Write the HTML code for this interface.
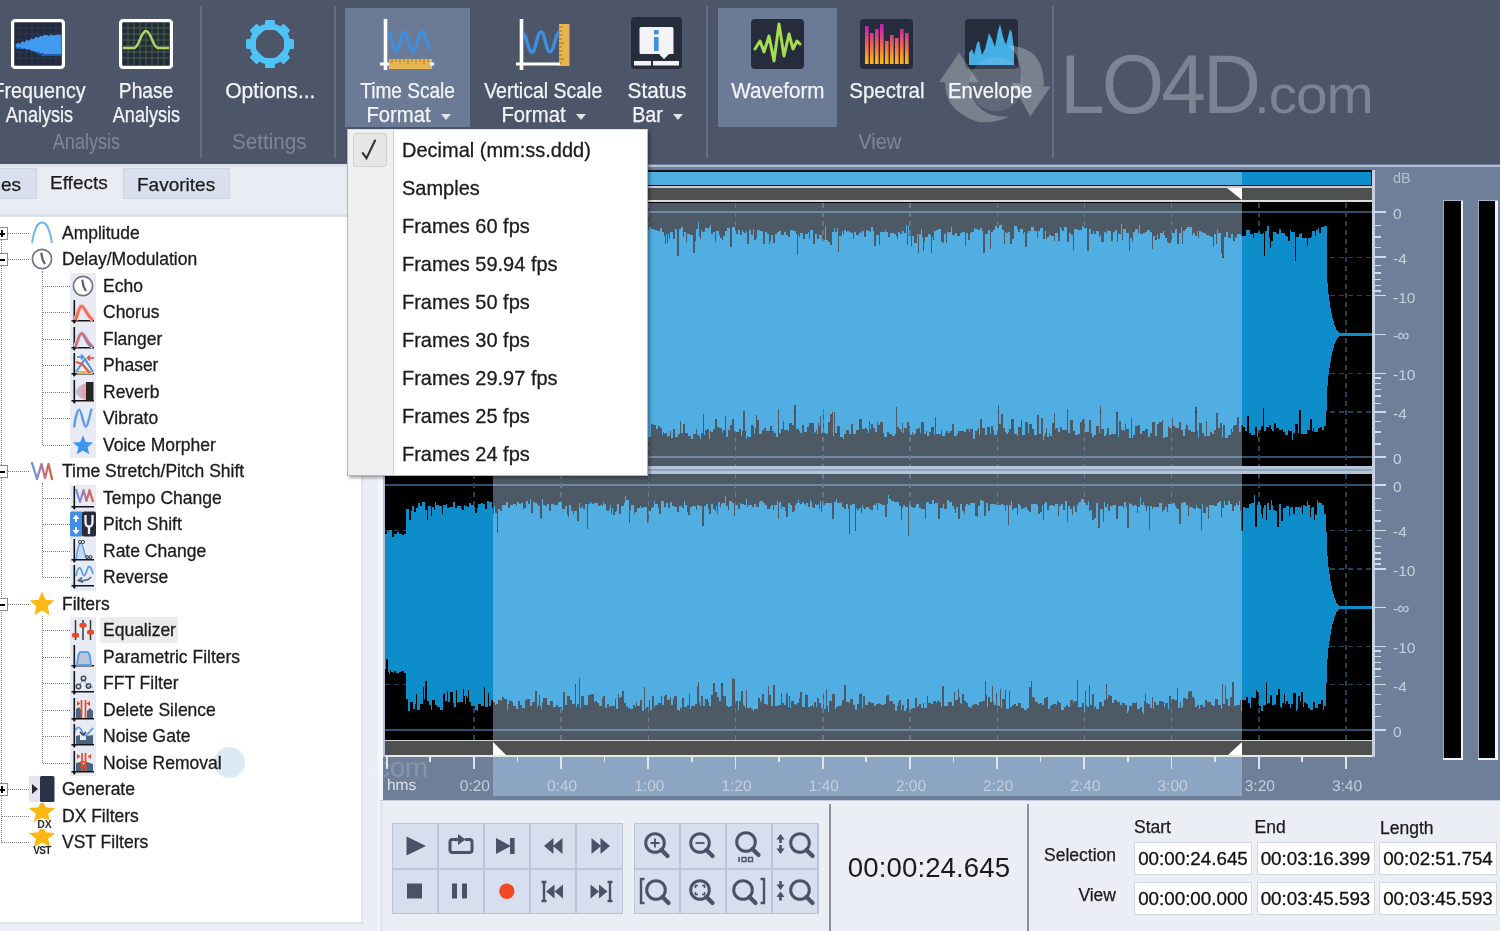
<!DOCTYPE html>
<html lang="en">
<head>
<meta charset="utf-8">
<title>Audio Editor</title>
<style>
*{box-sizing:border-box;margin:0;padding:0}
html,body{width:1500px;height:931px;overflow:hidden;background:#eceef6;font-family:"Liberation Sans",sans-serif;color:#1b1b1b}
.abs{position:absolute}
#ribbon{position:absolute;left:0;top:0;width:1500px;height:164px;background:#4d5669}
#ribbon .sep{position:absolute;top:6px;width:2px;height:152px;background:#626c82;margin-left:-1px}
.rb{-webkit-text-stroke:.25px #f2f4f8;position:absolute;text-align:center;color:#f2f4f8;font-size:21.2px;line-height:23.8px;white-space:nowrap}
.sx{display:inline-block;transform-origin:50% 50%}
.rb.hot{background:#6b7b95}
.rb .lbl{position:absolute;left:0;right:0;text-align:center}
.grp{position:absolute;top:130.4px;font-size:21.2px;line-height:24px;color:#7d8699;text-align:center}
.arrow{display:inline-block;width:0;height:0;border-left:5px solid transparent;border-right:5px solid transparent;border-top:6px solid #dfe3ea;margin-left:9px;vertical-align:2px}
/* left panel */
#left{position:absolute;left:0;top:164px;width:363px;height:767px;background:#fff}
#tabstrip{position:absolute;left:0;top:0;width:363px;height:53px;background:#e9ecf5}
.tab{-webkit-text-stroke:.25px #1b1b1b;position:absolute;top:4px;height:31px;background:#d9dfec;border:1px solid #cdd4e2;font-size:17.5px;line-height:30px;text-align:center;color:#1b1b1b}
.tab.on{background:#e9ecf5;border-color:#e9ecf5;top:3px;height:34px}
.row{-webkit-text-stroke:.3px #1b1b1b;position:absolute;left:0;height:26px;font-size:18.1px;line-height:26px;white-space:nowrap;color:#1b1b1b;transform:scaleX(.967);transform-origin:0 50%}
.dots{position:absolute;height:0;border-top:1px dotted #808080}
.vdots{position:absolute;width:0;border-left:1px dotted #808080}
.pm{position:absolute;width:11px;height:11px;border:1px solid #8a8a8a;background:#fff}
.pm:before{content:"";position:absolute;left:2px;top:4.5px;width:7px;height:2px;background:#000}
.pm.plus:after{content:"";position:absolute;left:4.5px;top:2px;width:2px;height:7px;background:#000}
/* menu */
#menu{position:absolute;left:347px;top:128.500px;width:301px;height:347.500px;background:#fff;border:1px solid #b5b5b5;border-top-color:#e0e0e0;box-shadow:2px 2px 3px rgba(0,0,0,.35)}
#menu .gutter{position:absolute;left:0;top:0;width:45.500px;height:345.500px;background:#f0f0f0;border-right:1.500px solid #cfcfcf}
#menu .mi{-webkit-text-stroke:.3px #1b1b1b;position:absolute;left:54px;font-size:21px;line-height:38px;height:38px;color:#1b1b1b;white-space:nowrap;transform:scaleX(.952);transform-origin:0 50%}
#menu .chk{position:absolute;left:5px;top:3.500px;width:33.500px;height:33.500px;background:#e6e6e6;border:1px solid #d2d2d2;border-radius:3px}
/* bottom */
#bottom{position:absolute;left:380px;top:800px;width:1120px;height:131px;background:#eceef6}
.btn{position:absolute;width:45px;height:45px;background:#d8e0ee;border:1px solid #c3cddd}
.fld{-webkit-text-stroke:.3px #111;position:absolute;height:33px;background:#fff;border:1px solid #d3d8e2;font-size:18.8px;line-height:32px;text-align:center;color:#111}
.flbl{-webkit-text-stroke:.25px #1b1b1b;position:absolute;font-size:17.5px;line-height:22px;color:#1b1b1b}
</style>
</head>
<body>
<div id="ribbon">
  <div class="sep" style="left:201px"></div>
  <div class="sep" style="left:335px"></div>
  <div class="sep" style="left:707px"></div>
  <div class="sep" style="left:1053px"></div>

  <!-- Frequency Analysis -->
  <svg class="abs" style="left:11px;top:19px" width="54" height="50" viewBox="0 0 54 50">
    <rect x="1.5" y="1.5" width="51" height="47" rx="3" fill="#232a3b" stroke="#fff" stroke-width="3.4"/>
    <g stroke="#2d3a54" stroke-width="1">
      <path d="M9 4V46M15 4V46M21 4V46M27 4V46M33 4V46M39 4V46M45 4V46M4 9H50M4 15H50M4 21H50M4 27H50M4 33H50M4 39H50"/>
    </g>
    <path d="M4.7 28L7 26.5L9 28.5L11.5 27L13.5 29.5L16 28L18 31L20.5 30L22.5 33L25 32L27 35.5L29.5 35L31 37.5L33 37H50.3V30H4.7Z" fill="#1f5fae"/>
    <path d="M4.7 25.5L7 23.5L9 25L11.5 22L13.5 23.5L16 20.5L18 22L20.5 19L22.5 20.5L25 17.5L27 19L29.5 16.5L31 17.5L33 16H36L38 17L40 15.5L43 16.5L46 15.5L50.3 16V35H33L31 33.5L29.5 34.5L27 32.5L25 33.5L22.5 31.5L20.5 32L18 30L16 31L13.5 29L11.5 30L9 28L7 29L4.7 27.5Z" fill="#3f9af0"/>
  </svg>
  <div class="rb" style="left:-21px;top:79px;width:120px"><div><span class="sx" style="transform:scaleX(0.93)">Frequency</span></div><div><span class="sx" style="transform:scaleX(0.855)">Analysis</span></div></div>

  <!-- Phase Analysis -->
  <svg class="abs" style="left:119px;top:19px" width="54" height="50" viewBox="0 0 54 50">
    <rect x="1.5" y="1.5" width="51" height="47" rx="3" fill="#232a3b" stroke="#fff" stroke-width="3.4"/>
    <g stroke="#4b6445" stroke-width="1">
      <path d="M9 4V46M15 4V46M21 4V46M27 4V46M33 4V46M39 4V46M45 4V46M4 9H50M4 15H50M4 21H50M4 27H50M4 33H50M4 39H50"/>
    </g>
    <path d="M4 29 H15 C20 29 22 12 27 12 C32 12 34 29 39 29 H50" fill="none" stroke="#a8da62" stroke-width="2.4"/>
  </svg>
  <div class="rb" style="left:86px;top:79px;width:120px"><div><span class="sx" style="transform:scaleX(0.905)">Phase</span></div><div><span class="sx" style="transform:scaleX(0.855)">Analysis</span></div></div>
  <div class="grp" style="left:26px;width:120px"><span class="sx" style="transform:scaleX(0.855)">Analysis</span></div>

  <!-- Options -->
  <svg class="abs" style="left:244px;top:18px" width="52" height="52" viewBox="-26 -26 52 52">
    <g fill="#4fc3f7">
      <g id="teeth">
        <rect x="-5" y="-24" width="10" height="10" rx="1.5"/>
        <rect x="-5" y="14" width="10" height="10" rx="1.5"/>
        <rect x="-24" y="-5" width="10" height="10" rx="1.5"/>
        <rect x="14" y="-5" width="10" height="10" rx="1.5"/>
      </g>
      <g transform="rotate(45)">
        <rect x="-5" y="-24" width="10" height="10" rx="1.5"/>
        <rect x="-5" y="14" width="10" height="10" rx="1.5"/>
        <rect x="-24" y="-5" width="10" height="10" rx="1.5"/>
        <rect x="14" y="-5" width="10" height="10" rx="1.5"/>
      </g>
    </g>
    <circle cx="0" cy="0" r="17.5" fill="none" stroke="#4fc3f7" stroke-width="6"/>
  </svg>
  <div class="rb" style="left:210px;top:79px;width:120px"><span class="sx" style="transform:scaleX(0.995)">Options...</span></div>
  <div class="grp" style="left:209px;width:120px"><span class="sx" style="transform:scaleX(0.975)">Settings</span></div>

  <!-- Time Scale Format (hot) -->
  <div class="rb hot" style="left:345.4px;top:8px;width:124.6px;height:119px"></div>
  <svg class="abs" style="left:380px;top:18px" width="56" height="54" viewBox="0 0 56 54">
    <rect x="9" y="41" width="43" height="10" fill="#e6b450"/>
    <path d="M12 41v4M16 41v3M20 41v4M24 41v3M28 41v5M32 41v3M36 41v4M40 41v3M44 41v5M48 41v3" stroke="#a07820" stroke-width="1"/>
    <path d="M5.5 1V52" stroke="#fff" stroke-width="3.6"/>
    <path d="M0 46H9M50 46H54" stroke="#fff" stroke-width="3.2"/>
    <path d="M8.4 14 C11 14 13.5 33.5 16.4 33.5 S21.5 14 24.4 14 S30 33.5 33 33.5 S39 14 42 14 S47 24 49 32" fill="none" stroke="#3f8fe0" stroke-width="3.4"/>
  </svg>
  <div class="rb" style="left:346px;top:79px;width:124px"><div><span class="sx" style="transform:scaleX(0.9)">Time Scale</span></div><div><span class="sx" style="transform:scaleX(0.955)">Format</span><span class="arrow"></span></div></div>

  <!-- Vertical Scale Format -->
  <svg class="abs" style="left:515px;top:18px" width="58" height="54" viewBox="0 0 58 54">
    <rect x="44" y="6" width="10.5" height="42" fill="#e6b450"/>
    <path d="M44 9h4M44 13h3M44 17h4M44 21h3M44 25h5M44 29h3M44 33h4M44 37h3M44 41h5M44 45h3" stroke="#a07820" stroke-width="1"/>
    <path d="M6.5 1V52" stroke="#fff" stroke-width="3.6"/>
    <path d="M1 46H45" stroke="#fff" stroke-width="3.2"/>
    <path d="M9 16 C11 16 13 34 17 34 S 22 14 26 14 S 31 34 35 34 S 40 16 44 14" fill="none" stroke="#3f8fe0" stroke-width="3.4"/>
  </svg>
  <div class="rb" style="left:473px;top:79px;width:140px"><div><span class="sx" style="transform:scaleX(0.92)">Vertical Scale</span></div><div><span class="sx" style="transform:scaleX(0.955)">Format</span><span class="arrow"></span></div></div>

  <!-- Status Bar -->
  <svg class="abs" style="left:631px;top:17px" width="51" height="52" viewBox="0 0 51 52">
    <rect x="0" y="0" width="51" height="52" rx="4" fill="#262c3c"/>
    <path d="M10 10 H41 a1.5 1.5 0 0 1 1.5 1.5 V37 H38 L33 42 L28 37 H10 a1.5 1.5 0 0 1 -1.5 -1.5 V11.5 A1.5 1.5 0 0 1 10 10Z" fill="#f1f3f7"/>
    <rect x="23" y="13" width="4.6" height="4.4" fill="#3f8fe0"/>
    <rect x="23" y="20" width="4.6" height="14" fill="#3f8fe0"/>
    <rect x="3" y="44" width="17" height="4.5" fill="#f1f3f7"/>
    <rect x="22" y="44" width="26" height="4.5" fill="#f1f3f7"/>
  </svg>
  <div class="rb" style="left:597px;top:79px;width:120px"><div><span class="sx" style="transform:scaleX(0.98)">Status</span></div><div><span class="sx" style="transform:scaleX(0.93)">Bar</span><span class="arrow"></span></div></div>

  <!-- Waveform (hot) -->
  <div class="rb hot" style="left:718px;top:8px;width:119px;height:119px"></div>
  <svg class="abs" style="left:751px;top:19px" width="53" height="50" viewBox="0 0 53 50">
    <rect width="53" height="50" rx="4" fill="#262c3c"/>
    <path d="M4 30 L9 22 L13 33 L18 17 L23 42 L28 5 L33 37 L38 15 L42 30 L46 22 L49 25" fill="none" stroke="#a5dc50" stroke-width="3" stroke-linejoin="round" stroke-linecap="round"/>
  </svg>
  <div class="rb" style="left:718px;top:79px;width:119px"><span class="sx" style="transform:scaleX(0.975)">Waveform</span></div>

  <!-- Spectral -->
  <svg class="abs" style="left:860px;top:19px" width="53" height="50" viewBox="0 0 53 50">
    <defs><linearGradient id="sg" x1="0" y1="5" x2="0" y2="45" gradientUnits="userSpaceOnUse"><stop offset="0.1" stop-color="#c724b1"/><stop offset="0.55" stop-color="#f06a4a"/><stop offset="0.95" stop-color="#fdb515"/></linearGradient></defs>
    <rect width="53" height="50" rx="4" fill="#262c3c"/>
    <g fill="url(#sg)">
      <rect x="5" y="7" width="3.6" height="38"/><rect x="10" y="14" width="3.6" height="31"/><rect x="15" y="10" width="3.6" height="35"/><rect x="20" y="5" width="3.6" height="40"/><rect x="25" y="22" width="3.6" height="23"/><rect x="30" y="16" width="3.6" height="29"/><rect x="35" y="19" width="3.6" height="26"/><rect x="40" y="10" width="3.6" height="35"/><rect x="45" y="14" width="3.6" height="31"/>
    </g>
  </svg>
  <div class="rb" style="left:827px;top:79px;width:120px"><span class="sx" style="transform:scaleX(0.968)">Spectral</span></div>

  <!-- Envelope -->
  <svg class="abs" style="left:965px;top:19px" width="53" height="50" viewBox="0 0 53 50">
    <rect width="53" height="50" rx="4" fill="#262c3c"/>
    <path d="M4 46 V34 L7 30 L9 36 L12 24 L14 22 L17 36 L20 30 L24 14 L27 20 L30 28 L33 12 L35 5 L38 18 L41 26 L45 10 L47 14 L49 30 V46Z" fill="#45aee5"/>
  </svg>
  <div class="rb" style="left:930px;top:79px;width:120px"><span class="sx" style="transform:scaleX(0.955)">Envelope</span></div>
  <div class="grp" style="left:820px;width:120px"><span class="sx" style="transform:scaleX(0.95)">View</span></div>

  <!-- watermark -->
  <svg class="abs" style="left:930px;top:30px" width="130" height="110" viewBox="930 30 130 110">
    <circle cx="996.1" cy="84.2" r="27" fill="#fff" fill-opacity=".1"/>
    <g fill="#fff" fill-opacity=".25">
      <path d="M938.9 82.2L959.1 52.8L978.7 82.2L968.9 82.2Q968.9 98.2 981.5 109.4Q992.6 117.8 1009.4 116.4Q995.4 123.4 978.7 122.0Q961.9 117.8 950.7 103.8Q945.1 94.0 945.1 82.2Z"/>
      <path d="M1011.5 82.8L1050.6 86.8L1030.3 116.4ZM1043.6 86.2Q1045.0 67.5 1034.5 54.9Q1024.7 45.8 1008.0 45.8Q1017.8 53.5 1019.9 66.1Q1021.3 75.9 1020.6 83.7Z"/>
    </g>
  </svg>
  <div id="wm" class="abs" style="left:1060px;top:36px;font-size:84px;line-height:96px;letter-spacing:-3px;color:#7b8493;white-space:nowrap;transform:scaleX(.955);transform-origin:0 0">LO4D</div>
  <div id="wm2" class="abs" style="left:1254px;top:63px;font-size:54px;line-height:62px;letter-spacing:-1px;color:#7b8493;white-space:nowrap;transform:scaleX(1.05);transform-origin:0 0">.com</div>
</div>

<div id="left">
<div id="tabstrip"><div class="abs" style="left:0;top:0;width:363px;height:3px;background:#dfe3ec"></div><div class="tab" style="left:-20px;width:57px;text-align:right;padding-right:17px;font-size:19px;line-height:32px">Files</div><div class="tab on" style="left:37px;width:85px;font-size:19px;text-align:left;padding-left:12px">Effects</div><div class="tab" style="left:123px;width:107px;font-size:19px;text-align:left;padding-left:13px;line-height:32px">Favorites</div><div class="abs" style="left:0;top:50px;width:363px;height:3px;background:#dde1ea"></div></div>
<div class="vdots" style="left:1px;top:69px;height:610px"></div>
<div class="vdots" style="left:42px;top:107px;height:174px"></div>
<div class="vdots" style="left:42px;top:319px;height:94px"></div>
<div class="vdots" style="left:42px;top:452px;height:147px"></div>
<div class="dots" style="left:2px;top:69px;width:27px"></div>
<div class="pm plus" style="left:-5px;top:63px;width:13px;height:13px"></div>

<svg class="abs" style="left:28.5px;top:55.7px" width="26" height="26" viewBox="0 0 26 26"><path d="M3 23C6 5 9.5 2.5 13 2.5S20 5 23 23" stroke="#72b2ea" stroke-width="1.9" fill="none"/></svg>
<div class="row" style="left:62px;top:55.5px">Amplitude</div>
<div class="dots" style="left:2px;top:95px;width:27px"></div>
<div class="pm " style="left:-5px;top:89px;width:13px;height:13px"></div>

<svg class="abs" style="left:28.5px;top:82.2px" width="26" height="26" viewBox="0 0 26 26"><circle cx="13" cy="13" r="9.6" fill="#fff" stroke="#707782" stroke-width="1.7"/><path d="M12.4 7.5L13.6 13.5L15.6 17.2" stroke="#5a616c" stroke-width="2.2" fill="none" stroke-linecap="round"/></svg>
<div class="row" style="left:62px;top:82px">Delay/Modulation</div>
<div class="dots" style="left:43px;top:122px;width:27px"></div>
<div class="abs" style="left:69.5px;top:108.5px;width:26.5px;height:26.5px;background:#e8eaf4"></div>
<svg class="abs" style="left:69.5px;top:108.7px" width="26" height="26" viewBox="0 0 26 26"><circle cx="13" cy="13" r="9.6" fill="#fff" stroke="#707782" stroke-width="1.7"/><path d="M12.4 7.5L13.6 13.5L15.6 17.2" stroke="#5a616c" stroke-width="2.2" fill="none" stroke-linecap="round"/></svg>
<div class="row" style="left:103px;top:108.5px">Echo</div>
<div class="dots" style="left:43px;top:148px;width:27px"></div>
<div class="abs" style="left:69.5px;top:135px;width:26.5px;height:26.5px;background:#e8eaf4"></div>
<svg class="abs" style="left:69.5px;top:135.2px" width="26" height="26" viewBox="0 0 26 26"><path d="M4.3 1V24M1.5 21.8H24" stroke="#151515" stroke-width="1.6" fill="none"/><path d="M2.6 22.2L4.3 25L6 22.2Z" fill="#151515"/><path d="M5.5 21C8 14 9.5 7 11.5 7C14.5 7 17 17 23 21" fill="none" stroke="#f9c4b8" stroke-width="4.6"/><path d="M5.5 21C8 14 9.5 7 11.5 7C14.5 7 17 17 23 21" fill="none" stroke="#ee6a58" stroke-width="2.6"/></svg>
<div class="row" style="left:103px;top:135px">Chorus</div>
<div class="dots" style="left:43px;top:175px;width:27px"></div>
<div class="abs" style="left:69.5px;top:161.5px;width:26.5px;height:26.5px;background:#e8eaf4"></div>
<svg class="abs" style="left:69.5px;top:161.7px" width="26" height="26" viewBox="0 0 26 26"><path d="M4.3 1V24M1.5 21.8H24" stroke="#151515" stroke-width="1.6" fill="none"/><path d="M2.6 22.2L4.3 25L6 22.2Z" fill="#151515"/><path d="M5.5 21C8 14 9.5 7 11.5 7C14.5 7 17 17 23 21" fill="none" stroke="#c9d9ee" stroke-width="4.6"/><path d="M12.5 8.5C15 10 15.5 17.5 21 20.5" fill="none" stroke="#5b9bd8" stroke-width="2"/><path d="M5.5 21C8 14 9.5 7.5 11.5 7.5C14.5 7.5 17 17 23 21" fill="none" stroke="#dc6470" stroke-width="2.3"/></svg>
<div class="row" style="left:103px;top:161.5px">Flanger</div>
<div class="dots" style="left:43px;top:201px;width:27px"></div>
<div class="abs" style="left:69.5px;top:188px;width:26.5px;height:26.5px;background:#e8eaf4"></div>
<svg class="abs" style="left:69.5px;top:188.2px" width="26" height="26" viewBox="0 0 26 26"><path d="M4.3 1V24M1.5 21.8H24" stroke="#151515" stroke-width="1.6" fill="none"/><path d="M2.6 22.2L4.3 25L6 22.2Z" fill="#151515"/><path d="M8 19H22L23 22H7Z" fill="#e8b84a"/><path d="M6 20L15 7L23 20" fill="none" stroke="#4a90e0" stroke-width="2"/><path d="M6 10L12 12L20 21" fill="none" stroke="#e25a3c" stroke-width="2.2"/><path d="M7 5h6M11 2.5L13.5 5L11 7.5" stroke="#3f8ae0" stroke-width="1.6" fill="none"/><path d="M24 6h-6M20 3.5L17.5 6L20 8.5" stroke="#e8492c" stroke-width="1.6" fill="none"/></svg>
<div class="row" style="left:103px;top:188px">Phaser</div>
<div class="dots" style="left:43px;top:228px;width:27px"></div>
<div class="abs" style="left:69.5px;top:214.5px;width:26.5px;height:26.5px;background:#e8eaf4"></div>
<svg class="abs" style="left:69.5px;top:214.7px" width="26" height="26" viewBox="0 0 26 26"><path d="M4.3 1V24M1.5 21.8H24" stroke="#151515" stroke-width="1.6" fill="none"/><path d="M2.6 22.2L4.3 25L6 22.2Z" fill="#151515"/><rect x="16" y="3" width="7.5" height="18.5" fill="#262626"/><path d="M16 4C8 7 6 11 6 13S8 18 16 21Z" fill="#e7a6a6"/><path d="M11 6.5C8 9 7 11 7 13S8 17 11 19.5Z" fill="#b9bfe8" opacity=".8"/></svg>
<div class="row" style="left:103px;top:214.5px">Reverb</div>
<div class="dots" style="left:43px;top:254px;width:27px"></div>
<div class="abs" style="left:69.5px;top:241px;width:26.5px;height:26.5px;background:#e8eaf4"></div>
<svg class="abs" style="left:69.5px;top:241.2px" width="26" height="26" viewBox="0 0 26 26"><path d="M4.2 21.6C5.5 12 7.5 4.6 9.2 4.6C11.5 4.6 13.5 21.6 15.6 21.6C17.5 21.6 19.5 12 21.3 4.6" stroke="#5b9fe6" stroke-width="2.4" fill="none" stroke-linecap="round"/></svg>
<div class="row" style="left:103px;top:241px">Vibrato</div>
<div class="dots" style="left:43px;top:281px;width:27px"></div>
<div class="abs" style="left:69.5px;top:267.6px;width:26.5px;height:26.5px;background:#e8eaf4"></div>
<svg class="abs" style="left:69.5px;top:267.8px" width="26" height="26" viewBox="0 0 26 26"><path d="M13 3.3 L15.8 9.9 L23 10.6 L17.6 15.3 L19.2 22.3 L13 18.6 L6.8 22.3 L8.4 15.3 L3 10.6 L10.2 9.9Z" fill="#3f96ee"/></svg>
<div class="row" style="left:103px;top:267.6px">Voice Morpher</div>
<div class="dots" style="left:2px;top:307px;width:27px"></div>
<div class="pm " style="left:-5px;top:301px;width:13px;height:13px"></div>

<svg class="abs" style="left:28.5px;top:294.3px" width="26" height="26" viewBox="0 0 26 26"><defs><linearGradient id="tg9" x1="0" x2="1"><stop offset="0" stop-color="#5f9be0"/><stop offset=".5" stop-color="#b07a9a"/><stop offset="1" stop-color="#e85a3c"/></linearGradient></defs><path d="M3 5L8 21L12.5 6L16 20L19.5 6L23 21" stroke="url(#tg9)" stroke-width="2.3" fill="none" stroke-linejoin="round" stroke-linecap="round"/></svg>
<div class="row" style="left:62px;top:294.1px">Time Stretch/Pitch Shift</div>
<div class="dots" style="left:43px;top:334px;width:27px"></div>
<div class="abs" style="left:69.5px;top:320.6px;width:26.5px;height:26.5px;background:#e8eaf4"></div>
<svg class="abs" style="left:69.5px;top:320.8px" width="26" height="26" viewBox="0 0 26 26"><path d="M4.3 1V24M1.5 21.8H24" stroke="#151515" stroke-width="1.6" fill="none"/><path d="M2.6 22.2L4.3 25L6 22.2Z" fill="#151515"/><defs><linearGradient id="tg10" x1="0" x2="1"><stop offset="0" stop-color="#5f9be0"/><stop offset=".5" stop-color="#b07a9a"/><stop offset="1" stop-color="#e85a3c"/></linearGradient></defs><path d="M6 4L10 17L13.5 5L16.5 16L19.5 5L23 17" stroke="url(#tg10)" stroke-width="2.2" fill="none" stroke-linejoin="round"/></svg>
<div class="row" style="left:103px;top:320.6px">Tempo Change</div>
<div class="dots" style="left:43px;top:360px;width:27px"></div>
<div class="abs" style="left:69.5px;top:347.1px;width:26.5px;height:26.5px;background:#e8eaf4"></div>
<svg class="abs" style="left:69.5px;top:347.3px" width="26" height="26" viewBox="0 0 26 26"><rect x="0" y="0.5" width="13" height="25" rx="2" fill="#3f8fe6"/><rect x="12" y="0.5" width="14" height="25" rx="2" fill="#262c3c"/><path d="M6 3.5L2.5 8H5V11H7V8H9.5ZM6 23.5L2.5 19H5V16H7V19H9.5Z" fill="#fff"/><path d="M15.5 4V11C15.5 17 22.5 17 22.5 11V4M19 16V23" stroke="#eef0f5" stroke-width="2.3" fill="none"/></svg>
<div class="row" style="left:103px;top:347.1px">Pitch Shift</div>
<div class="dots" style="left:43px;top:387px;width:27px"></div>
<div class="abs" style="left:69.5px;top:373.6px;width:26.5px;height:26.5px;background:#e8eaf4"></div>
<svg class="abs" style="left:69.5px;top:373.8px" width="26" height="26" viewBox="0 0 26 26"><path d="M4.3 1V24M1.5 21.8H24" stroke="#151515" stroke-width="1.6" fill="none"/><path d="M2.6 22.2L4.3 25L6 22.2Z" fill="#151515"/><path d="M6 21C8 8 9 5 11 5S14 16 16 19S19 19 22 20" fill="#c4daf2" stroke="#6a9fd8" stroke-width="1.5"/><circle cx="10" cy="4" r="1.6" fill="none" stroke="#444" stroke-width="1"/><circle cx="13" cy="4" r="1.6" fill="none" stroke="#444" stroke-width="1"/><circle cx="17" cy="19" r="1.5" fill="none" stroke="#444" stroke-width="1"/><circle cx="20.5" cy="19" r="1.5" fill="none" stroke="#444" stroke-width="1"/></svg>
<div class="row" style="left:103px;top:373.6px">Rate Change</div>
<div class="dots" style="left:43px;top:413px;width:27px"></div>
<div class="abs" style="left:69.5px;top:400.1px;width:26.5px;height:26.5px;background:#e8eaf4"></div>
<svg class="abs" style="left:69.5px;top:400.3px" width="26" height="26" viewBox="0 0 26 26"><path d="M4.3 1V24M1.5 21.8H24" stroke="#151515" stroke-width="1.6" fill="none"/><path d="M2.6 22.2L4.3 25L6 22.2Z" fill="#151515"/><path d="M6 12C8 2 10 2 12 8S15 12 17 6S21 2 23 10" fill="none" stroke="#5b9fe6" stroke-width="1.8"/><path d="M21 13C18 17 14 17 10 16.5M12 13.5L8.5 16.5L13 18.5" fill="none" stroke="#5f7286" stroke-width="1.9"/></svg>
<div class="row" style="left:103px;top:400.1px">Reverse</div>
<div class="dots" style="left:2px;top:440px;width:27px"></div>
<div class="pm " style="left:-5px;top:434px;width:13px;height:13px"></div>

<svg class="abs" style="left:28.5px;top:426.8px" width="26" height="26" viewBox="0 0 26 26"><path d="M13 0.5 L16.5 8.7 L25.4 9.5 L18.7 15.3 L20.6 24 L13 19.5 L5.4 24 L7.3 15.3 L0.6 9.5 L9.5 8.7Z" fill="#fdb913"/></svg>
<div class="row" style="left:62px;top:426.6px">Filters</div>
<div class="dots" style="left:43px;top:466px;width:27px"></div>
<div class="abs" style="left:69.5px;top:453.1px;width:26.5px;height:26.5px;background:#e8eaf4"></div>
<svg class="abs" style="left:69.5px;top:453.3px" width="26" height="26" viewBox="0 0 26 26"><path d="M5.5 3V23M13 3V23M20.5 3V23" stroke="#3a3a3a" stroke-width="1.5"/><rect x="2" y="16" width="7" height="4.5" rx="1.5" fill="#e84a26"/><rect x="9.5" y="6" width="7" height="4.5" rx="1.5" fill="#e84a26"/><rect x="17" y="13" width="7" height="4.5" rx="1.5" fill="#e84a26"/></svg>
<div class="abs" style="left:100px;top:453.3px;width:78px;height:26px;background:#ececec"></div>
<div class="row" style="left:103px;top:453.1px">Equalizer</div>
<div class="dots" style="left:43px;top:493px;width:27px"></div>
<div class="abs" style="left:69.5px;top:479.6px;width:26.5px;height:26.5px;background:#e8eaf4"></div>
<svg class="abs" style="left:69.5px;top:479.8px" width="26" height="26" viewBox="0 0 26 26"><path d="M4.3 1V24M1.5 21.8H24" stroke="#151515" stroke-width="1.6" fill="none"/><path d="M2.6 22.2L4.3 25L6 22.2Z" fill="#151515"/><path d="M7 21C8 10 9 8 11 8H17C19 8 20 10 21 21Z" fill="#b9c6da" stroke="#5b9fe6" stroke-width="1.8"/></svg>
<div class="row" style="left:103px;top:479.6px">Parametric Filters</div>
<div class="dots" style="left:43px;top:519px;width:27px"></div>
<div class="abs" style="left:69.5px;top:506.1px;width:26.5px;height:26.5px;background:#e8eaf4"></div>
<svg class="abs" style="left:69.5px;top:506.3px" width="26" height="26" viewBox="0 0 26 26"><path d="M4.3 1V24M1.5 21.8H24" stroke="#151515" stroke-width="1.6" fill="none"/><path d="M2.6 22.2L4.3 25L6 22.2Z" fill="#151515"/><path d="M9 16L13 9L18 16L23 17.5" stroke="#8aa" stroke-width="1" fill="none"/><circle cx="8.5" cy="16.5" r="2.2" fill="none" stroke="#3d4a60" stroke-width="1.5"/><circle cx="13.5" cy="8.5" r="2.2" fill="none" stroke="#3d4a60" stroke-width="1.5"/><circle cx="18.5" cy="16" r="2.2" fill="none" stroke="#3d4a60" stroke-width="1.5"/></svg>
<div class="row" style="left:103px;top:506.1px">FFT Filter</div>
<div class="dots" style="left:43px;top:546px;width:27px"></div>
<div class="abs" style="left:69.5px;top:532.6px;width:26.5px;height:26.5px;background:#e8eaf4"></div>
<svg class="abs" style="left:69.5px;top:532.8px" width="26" height="26" viewBox="0 0 26 26"><path d="M4.3 1V24M1.5 21.8H24" stroke="#151515" stroke-width="1.6" fill="none"/><path d="M2.6 22.2L4.3 25L6 22.2Z" fill="#151515"/><path d="M6 21V12L9 10L11 13V21ZM17 21V14L20 11L23 14V21Z" fill="#4a6480"/><path d="M11.5 3V21M15.5 3V21" stroke="#e84a26" stroke-width="1.7"/><path d="M7 4L10.5 6.5L7 9ZM20 4L16.5 6.5L20 9Z" fill="#e84a26"/></svg>
<div class="row" style="left:103px;top:532.6px">Delete Silence</div>
<div class="dots" style="left:43px;top:572px;width:27px"></div>
<div class="abs" style="left:69.5px;top:559.1px;width:26.5px;height:26.5px;background:#e8eaf4"></div>
<svg class="abs" style="left:69.5px;top:559.3px" width="26" height="26" viewBox="0 0 26 26"><path d="M4.3 1V24M1.5 21.8H24" stroke="#151515" stroke-width="1.6" fill="none"/><path d="M2.6 22.2L4.3 25L6 22.2Z" fill="#151515"/><path d="M6 21V13L10 12V17H16V13L23 12V21Z" fill="#4a6480"/><path d="M5 8C8 2 10 4 13 10S18 10 23 5" stroke="#5b9fe6" stroke-width="1.8" fill="none"/><path d="M10 9L13 12L16 9" stroke="#333" stroke-width="1.4" fill="none"/></svg>
<div class="row" style="left:103px;top:559.1px">Noise Gate</div>
<div class="dots" style="left:43px;top:599px;width:27px"></div>
<div class="abs" style="left:69.5px;top:585.6px;width:26.5px;height:26.5px;background:#e8eaf4"></div>
<svg class="abs" style="left:69.5px;top:585.8px" width="26" height="26" viewBox="0 0 26 26"><path d="M4.3 1V24M1.5 21.8H24" stroke="#151515" stroke-width="1.6" fill="none"/><path d="M2.6 22.2L4.3 25L6 22.2Z" fill="#151515"/><path d="M6 21V13L10 12L13 15L17 12L23 14V21Z" fill="#4a6480"/><path d="M12 3V21M15.5 3V21" stroke="#e84a26" stroke-width="1.7"/><path d="M7 4L10.5 6.5L7 9ZM21 4L17.5 6.5L21 9Z" fill="#e84a26"/><path d="M10 12h7M10 17h7" stroke="#e84a26" stroke-width="1.5"/></svg>
<div class="row" style="left:103px;top:585.6px">Noise Removal</div>
<div class="dots" style="left:2px;top:625px;width:27px"></div>
<div class="pm plus" style="left:-5px;top:619px;width:13px;height:13px"></div>

<svg class="abs" style="left:28.5px;top:612.3px" width="26" height="26" viewBox="0 0 26 26"><rect x="0" y="0" width="12" height="26" fill="#e3e6f2"/><rect x="11" y="0" width="14.5" height="26" rx="1.5" fill="#2b3246"/><path d="M3 8L9 13L3 18Z" fill="#2a2a2a"/></svg>
<div class="row" style="left:62px;top:612.1px">Generate</div>
<div class="dots" style="left:2px;top:652px;width:27px"></div>

<svg class="abs" style="left:28.5px;top:638.9px" width="26" height="26" viewBox="0 0 26 26"><g transform="translate(13 0) scale(1.12 1) translate(-13 0)"><path d="M13 -3.5 L16.4 4.3 L24.9 5.1 L18.5 10.8 L20.3 19.1 L13 14.8 L5.7 19.1 L7.5 10.8 L1.1 5.1 L9.6 4.3Z" fill="#fdb913"/></g><text x="15.5" y="24.5" font-size="10.5" font-weight="bold" text-anchor="middle" fill="#333" style="paint-order:stroke" stroke="#fff" stroke-width="2.2" font-family="Liberation Sans, sans-serif">DX</text></svg>
<div class="row" style="left:62px;top:638.7px">DX Filters</div>
<div class="dots" style="left:2px;top:678px;width:27px"></div>

<svg class="abs" style="left:28.5px;top:665.4px" width="26" height="26" viewBox="0 0 26 26"><g transform="translate(13 0) scale(1.12 1) translate(-13 0)"><path d="M13 -4.5 L16.4 3.3 L24.9 4.1 L18.5 9.8 L20.3 18.1 L13 13.8 L5.7 18.1 L7.5 9.8 L1.1 4.1 L9.6 3.3Z" fill="#fdb913"/></g><text x="13" y="24.5" font-size="10" font-weight="bold" text-anchor="middle" fill="#222" font-family="Liberation Sans, sans-serif" letter-spacing="-.600">VST</text></svg>
<div class="row" style="left:62px;top:665.2px">VST Filters</div>
<div class="abs" style="left:361px;top:53px;width:2px;height:714px;background:#e3e6ee"></div>
<div class="abs" style="left:0;top:758px;width:363px;height:9px;background:#eceef6;border-top:2px solid #dfe2ea"></div>
</div>
<div class="abs" style="left:363px;top:164px;width:22px;height:767px;background:#eceef6"></div>
<div class="abs" style="left:363px;top:164px;width:22px;height:767px;background:#eceef6"></div>
<div class="abs" style="left:378px;top:164px;width:4.5px;height:767px;background:#f3f5fa"></div>
<div class="abs" style="left:382.5px;top:164px;width:3px;height:593px;background:#b4c0d6"></div>
<div class="abs" style="left:382.5px;top:756.8px;width:3px;height:43.5px;background:#6e7f99"></div>
<svg class="abs" style="left:385px;top:164px" width="1115" height="636" viewBox="385 164 1115 636" shape-rendering="crispEdges" font-family="Liberation Sans, sans-serif">
<rect x="385" y="164" width="1115" height="636" fill="#6e7f99"/>
<rect x="385" y="164.7" width="1115" height="2.6" fill="#b8c0d8"/>
<rect x="385" y="170" width="987" height="16" fill="#06101c"/>
<rect x="385" y="171.5" width="857" height="13" fill="#51aee2"/>
<rect x="1242" y="171.5" width="129" height="13" fill="#0e8dcb"/>
<rect x="385" y="186" width="987" height="17" fill="#4f5050"/>
<rect x="385" y="186" width="987" height="2.3" fill="#cfcacf"/>
<rect x="385" y="199.5" width="987" height="2" fill="#dcdcdc"/>
<rect x="385" y="201.5" width="987" height="1.5" fill="#000"/>
<path d="M1227 188H1242V200Z" fill="#fff" shape-rendering="auto"/>
<defs><clipPath id="selclip"><rect x="493" y="164" width="749" height="640"/></clipPath></defs>
<rect x="385" y="203" width="987" height="263.5" fill="#000"/>
<rect x="493" y="203" width="749" height="263.5" fill="#4d5964"/>
<rect x="385" y="211" width="987" height="1.6" fill="#33506a"/>
<rect x="493" y="211" width="749" height="1.6" fill="#6f89a6"/>
<rect x="385" y="456.2" width="987" height="1.6" fill="#33506a"/>
<rect x="493" y="456.2" width="749" height="1.6" fill="#6f89a6"/>
<path d="M385 257.2H1372" stroke="#1f4458" stroke-width="1.3" stroke-dasharray="5 4"/>
<path d="M385 412H1372" stroke="#1f4458" stroke-width="1.3" stroke-dasharray="5 4"/>
<path d="M385 295.8H1372" stroke="#1f4458" stroke-width="1.3" stroke-dasharray="5 4"/>
<path d="M385 373.4H1372" stroke="#1f4458" stroke-width="1.3" stroke-dasharray="5 4"/>
<path d="M385 334.6H1372" stroke="#1f4458" stroke-width="1.3" stroke-dasharray="5 4"/>
<path d="M473.9 203V466.5" stroke="#1f4458" stroke-width="1.4" stroke-dasharray="5 4"/>
<path d="M561.1 203V466.5" stroke="#667a8a" stroke-width="1.4" stroke-dasharray="5 4"/>
<path d="M648.3 203V466.5" stroke="#667a8a" stroke-width="1.4" stroke-dasharray="5 4"/>
<path d="M735.5 203V466.5" stroke="#667a8a" stroke-width="1.4" stroke-dasharray="5 4"/>
<path d="M822.8 203V466.5" stroke="#667a8a" stroke-width="1.4" stroke-dasharray="5 4"/>
<path d="M910 203V466.5" stroke="#667a8a" stroke-width="1.4" stroke-dasharray="5 4"/>
<path d="M997.2 203V466.5" stroke="#667a8a" stroke-width="1.4" stroke-dasharray="5 4"/>
<path d="M1084.4 203V466.5" stroke="#667a8a" stroke-width="1.4" stroke-dasharray="5 4"/>
<path d="M1171.6 203V466.5" stroke="#667a8a" stroke-width="1.4" stroke-dasharray="5 4"/>
<path d="M1258.8 203V466.5" stroke="#1f4458" stroke-width="1.4" stroke-dasharray="5 4"/>
<path d="M1346 203V466.5" stroke="#1f4458" stroke-width="1.4" stroke-dasharray="5 4"/>
<path d="M385 261H387L387 264H389L389 262H391L391 260H394L394 261H397L397 259H398L398 257H401L401 269H403L403 259H406L406 239H407L407 232H408L408 232H410L410 234H412L412 229H413L413 242H414L414 232H415L415 231H417L417 229H419L419 235H421L421 237H422L422 241H424L424 231H426L426 229H428L428 228H429L429 231H430L430 232H433L433 228H436L436 237H438L438 238H440L440 229H443L443 230H445L445 237H447L447 232H449L449 254H450L450 234H452L452 230H454L454 233H457L457 236H458L458 232H460L460 229H462L462 230H464L464 231H467L467 229H470L470 230H471L471 234H473L473 234H475L475 234H477L477 232H478L478 235H479L479 227H481L481 237H483L483 240H484L484 225H485L485 233H486L486 228H487L487 228H489L489 230H490L490 229H492L492 236H494L494 226H495L495 226H496L496 232H497L497 233H499L499 234H501L501 233H502L502 235H504L504 235H505L505 233H506L506 240H508L508 234H510L510 229H511L511 234H513L513 232H514L514 233H515L515 240H516L516 229H519L519 231H522L522 234H524L524 236H527L527 232H529L529 231H531L531 232H533L533 238H534L534 235H535L535 236H537L537 236H539L539 235H541L541 235H544L544 251H546L546 247H547L547 234H548L548 232H550L550 229H552L552 235H555L555 235H558L558 236H560L560 226H561L561 229H563L563 230H565L565 232H566L566 234H567L567 228H569L569 227H570L570 228H571L571 234H573L573 231H575L575 238H576L576 234H577L577 232H578L578 233H580L580 229H582L582 227H585L585 233H586L586 228H587L587 230H589L589 234H591L591 241H592L592 238H593L593 231H594L594 233H596L596 233H597L597 243H599L599 231H602L602 225H604L604 221H605L605 224H607L607 230H609L609 230H610L610 236H611L611 232H613L613 235H615L615 231H617L617 226H619L619 230H622L622 232H624L624 235H625L625 233H627L627 232H628L628 230H630L630 231H631L631 236H633L633 232H635L635 249H637L637 235H638L638 235H641L641 232H642L642 236H643L643 232H645L645 230H647L647 230H649L649 227H651L651 229H654L654 230H657L657 231H660L660 228H662L662 232H664L664 236H665L665 244H666L666 234H667L667 243H668L668 234H669L669 239H670L670 232H673L673 239H675L675 229H677L677 256H679L679 229H681L681 227H683L683 237H684L684 232H686L686 242H687L687 234H690L690 235H693L693 253H695L695 241H696L696 229H698L698 222H699L699 236H700L700 239H701L701 230H702L702 232H704L704 232H705L705 228H708L708 229H709L709 227H710L710 225H711L711 234H713L713 232H715L715 242H716L716 231H719L719 235H720L720 238H722L722 240H723L723 236H725L725 231H727L727 228H730L730 247H732L732 227H735L735 231H736L736 234H738L738 230H740L740 235H742L742 230H743L743 232H744L744 233H746L746 231H747L747 244H749L749 230H751L751 235H753L753 229H754L754 240H756L756 238H757L757 230H760L760 231H763L763 244H765L765 232H767L767 234H769L769 244H770L770 241H771L771 235H773L773 243H775L775 234H777L777 232H779L779 231H781L781 235H784L784 232H786L786 235H788L788 237H790L790 230H793L793 231H796L796 234H797L797 255H798L798 235H799L799 237H800L800 233H803L803 239H805L805 234H808L808 232H809L809 239H810L810 230H813L813 244H815L815 234H817L817 239H819L819 235H822L822 241H824L824 240H825L825 226H826L826 240H828L828 242H830L830 245H832L832 232H834L834 228H835L835 232H837L837 228H838L838 252H839L839 236H841L841 236H842L842 231H843L843 234H844L844 230H846L846 232H847L847 231H849L849 232H851L851 233H853L853 239H854L854 232H856L856 235H859L859 233H860L860 232H861L861 233H862L862 231H864L864 237H866L866 230H867L867 230H868L868 231H870L870 232H871L871 227H873L873 231H874L874 246H876L876 235H879L879 245H880L880 232H882L882 232H883L883 232H885L885 230H886L886 232H888L888 237H890L890 233H891L891 233H894L894 234H896L896 236H897L897 239H898L898 232H900L900 234H901L901 234H902L902 231H904L904 233H906L906 225H907L907 245H908L908 226H909L909 236H911L911 246H912L912 236H914L914 243H916L916 243H917L917 234H918L918 253H919L919 234H921L921 229H922L922 237H923L923 251H924L924 242H925L925 237H926L926 237H928L928 234H930L930 235H931L931 253H932L932 237H933L933 240H934L934 231H936L936 230H938L938 229H941L941 242H943L943 243H944L944 234H946L946 243H947L947 232H948L948 233H949L949 232H951L951 227H952L952 235H955L955 233H957L957 236H960L960 233H962L962 232H964L964 232H965L965 246H966L966 233H968L968 240H970L970 233H971L971 232H974L974 228H975L975 229H978L978 230H980L980 228H982L982 231H983L983 253H985L985 234H988L988 230H990L990 249H991L991 232H992L992 232H993L993 230H995L995 226H997L997 228H999L999 225H1002L1002 230H1004L1004 244H1005L1005 232H1006L1006 233H1008L1008 232H1010L1010 244H1012L1012 239H1014L1014 226H1015L1015 226H1017L1017 229H1018L1018 232H1020L1020 229H1023L1023 234H1024L1024 232H1025L1025 247H1027L1027 233H1028L1028 231H1031L1031 227H1034L1034 231H1037L1037 238H1038L1038 231H1040L1040 228H1042L1042 228H1043L1043 239H1045L1045 231H1046L1046 239H1047L1047 237H1049L1049 235H1051L1051 236H1054L1054 241H1055L1055 233H1058L1058 241H1060L1060 227H1061L1061 229H1062L1062 231H1064L1064 227H1067L1067 242H1069L1069 233H1071L1071 235H1073L1073 250H1074L1074 229H1076L1076 229H1077L1077 230H1079L1079 230H1082L1082 226H1083L1083 227H1084L1084 228H1087L1087 251H1089L1089 229H1091L1091 234H1093L1093 231H1094L1094 234H1096L1096 231H1099L1099 237H1100L1100 235H1101L1101 242H1103L1103 242H1104L1104 232H1106L1106 233H1107L1107 230H1108L1108 231H1110L1110 231H1111L1111 241H1113L1113 232H1115L1115 230H1117L1117 242H1118L1118 234H1121L1121 224H1122L1122 240H1123L1123 229H1126L1126 233H1129L1129 251H1130L1130 238H1132L1132 242H1133L1133 232H1135L1135 229H1138L1138 233H1139L1139 225H1140L1140 234H1143L1143 233H1145L1145 232H1147L1147 230H1150L1150 232H1152L1152 249H1153L1153 236H1155L1155 240H1157L1157 234H1158L1158 239H1160L1160 233H1163L1163 231H1164L1164 235H1165L1165 238H1167L1167 242H1168L1168 243H1169L1169 243H1171L1171 241H1172L1172 233H1175L1175 229H1177L1177 244H1179L1179 233H1181L1181 227H1182L1182 244H1183L1183 231H1185L1185 229H1187L1187 227H1190L1190 227H1192L1192 235H1193L1193 233H1195L1195 236H1197L1197 231H1198L1198 238H1199L1199 231H1201L1201 232H1203L1203 233H1206L1206 235H1209L1209 236H1211L1211 237H1213L1213 247H1214L1214 234H1216L1216 244H1217L1217 230H1218L1218 233H1221L1221 253H1222L1222 258H1224L1224 237H1226L1226 232H1228L1228 238H1231L1231 234H1233L1233 241H1235L1235 237H1236L1236 238H1237L1237 234H1240L1240 234H1241L1241 236H1244L1244 236H1246L1246 230H1248L1248 230H1250L1250 234H1253L1253 238H1254L1254 233H1256L1256 233H1258L1258 232H1260L1260 234H1263L1263 233H1264L1264 256H1265L1265 231H1267L1267 226H1269L1269 238H1270L1270 248H1271L1271 241H1273L1273 232H1276L1276 233H1277L1277 234H1279L1279 229H1281L1281 233H1283L1283 233H1285L1285 236H1287L1287 237H1288L1288 241H1290L1290 230H1291L1291 232H1293L1293 232H1295L1295 261H1296L1296 237H1299L1299 234H1301L1301 233H1302L1302 238H1305L1305 238H1307L1307 246H1308L1308 238H1311L1311 237H1312L1312 231H1315L1315 236H1316L1316 230H1318L1318 228H1319L1319 233H1321L1321 227H1323L1323 227H1324L1324 226H1327L1327 283H1328L1328 294H1329L1329 301H1330L1330 308H1331L1331 313H1332L1332 318H1333L1333 321H1334L1334 325H1335L1335 327H1336L1336 330H1337L1337 331H1338L1338 332H1339L1339 333H1340L1340 333H1341L1341 333H1342L1342 333H1343L1343 333H1344L1344 333H1345L1345 333H1346L1346 333H1347L1347 333H1348L1348 333H1349L1349 333H1350L1350 333H1351L1351 333H1352L1352 333H1353L1353 333H1354L1354 333H1355L1355 333H1356L1356 333H1357L1357 333H1358L1358 333H1359L1359 333H1360L1360 333H1361L1361 333H1362L1362 333H1363L1363 333H1364L1364 333H1365L1365 333H1366L1366 333H1367L1367 333H1368L1368 333H1369L1369 333H1370L1370 333H1371L1371 333H1372L1372 336H1371L1371 336H1370L1370 336H1369L1369 336H1368L1368 336H1367L1367 336H1366L1366 336H1365L1365 336H1364L1364 336H1363L1363 336H1362L1362 336H1361L1361 336H1360L1360 336H1359L1359 336H1358L1358 336H1357L1357 336H1356L1356 336H1355L1355 336H1354L1354 336H1353L1353 336H1352L1352 336H1351L1351 336H1350L1350 336H1349L1349 336H1348L1348 336H1347L1347 336H1346L1346 336H1345L1345 336H1344L1344 336H1343L1343 336H1342L1342 336H1341L1341 336H1340L1340 336H1339L1339 337H1338L1338 338H1337L1337 340H1336L1336 342H1335L1335 344H1334L1334 348H1333L1333 351H1332L1332 356H1331L1331 362H1330L1330 368H1329L1329 375H1328L1328 386H1327L1327 411H1326L1326 426H1324L1324 430H1322L1322 427H1320L1320 428H1318L1318 432H1315L1315 432H1314L1314 428H1313L1313 431H1312L1312 419H1310L1310 430H1307L1307 434H1304L1304 434H1301L1301 410H1299L1299 433H1298L1298 424H1295L1295 433H1293L1293 440H1292L1292 431H1289L1289 430H1288L1288 435H1285L1285 432H1283L1283 429H1282L1282 430H1279L1279 428H1276L1276 423H1274L1274 431H1272L1272 429H1271L1271 425H1269L1269 427H1266L1266 431H1264L1264 408H1263L1263 426H1261L1261 430H1258L1258 437H1257L1257 427H1255L1255 435H1253L1253 435H1251L1251 433H1249L1249 416H1247L1247 431H1245L1245 427H1243L1243 425H1241L1241 432H1239L1239 417H1237L1237 425H1234L1234 426H1233L1233 432H1232L1232 429H1231L1231 435H1228L1228 438H1225L1225 425H1223L1223 437H1222L1222 423H1220L1220 428H1218L1218 413H1216L1216 430H1214L1214 434H1212L1212 432H1210L1210 436H1207L1207 421H1206L1206 436H1204L1204 433H1202L1202 423H1199L1199 438H1198L1198 431H1197L1197 407H1195L1195 432H1193L1193 432H1191L1191 430H1188L1188 425H1186L1186 429H1185L1185 436H1183L1183 430H1181L1181 422H1179L1179 428H1178L1178 428H1175L1175 426H1173L1173 418H1172L1172 428H1169L1169 426H1168L1168 437H1165L1165 438H1163L1163 420H1162L1162 422H1159L1159 424H1157L1157 436H1155L1155 422H1152L1152 433H1150L1150 437H1148L1148 429H1145L1145 431H1142L1142 434H1140L1140 425H1138L1138 426H1135L1135 435H1133L1133 438H1132L1132 418H1131L1131 438H1129L1129 429H1126L1126 424H1125L1125 431H1124L1124 430H1121L1121 421H1119L1119 437H1118L1118 412H1116L1116 434H1114L1114 434H1111L1111 435H1109L1109 428H1107L1107 434H1106L1106 436H1104L1104 429H1101L1101 406H1100L1100 433H1099L1099 426H1096L1096 435H1094L1094 437H1092L1092 433H1091L1091 420H1089L1089 432H1087L1087 432H1085L1085 419H1083L1083 420H1082L1082 422H1080L1080 434H1078L1078 435H1075L1075 431H1073L1073 420H1070L1070 433H1068L1068 409H1067L1067 430H1064L1064 430H1062L1062 427H1060L1060 432H1058L1058 428H1056L1056 429H1055L1055 413H1054L1054 423H1052L1052 436H1050L1050 433H1049L1049 437H1047L1047 428H1046L1046 433H1045L1045 436H1044L1044 440H1043L1043 418H1041L1041 434H1039L1039 415H1037L1037 435H1034L1034 429H1032L1032 424H1029L1029 433H1028L1028 422H1025L1025 435H1024L1024 435H1022L1022 420H1021L1021 427H1018L1018 436H1017L1017 434H1014L1014 419H1011L1011 429H1009L1009 432H1008L1008 434H1006L1006 432H1005L1005 428H1003L1003 414H1001L1001 424H999L999 405H998L998 430H997L997 435H994L994 430H993L993 426H991L991 434H990L990 427H987L987 435H985L985 428H982L982 419H980L980 435H979L979 428H978L978 430H977L977 431H975L975 439H973L973 429H970L970 432H969L969 429H966L966 432H964L964 431H961L961 431H958L958 434H957L957 436H954L954 424H952L952 431H950L950 433H948L948 431H946L946 433H945L945 436H942L942 430H941L941 434H939L939 434H936L936 417H935L935 435H934L934 427H931L931 432H929L929 436H927L927 431H926L926 434H924L924 422H921L921 433H920L920 428H918L918 429H916L916 434H914L914 435H913L913 432H912L912 435H910L910 426H909L909 422H907L907 428H904L904 433H903L903 423H902L902 432H901L901 429H899L899 427H897L897 407H896L896 434H895L895 436H892L892 434H889L889 432H887L887 437H884L884 433H883L883 422H880L880 425H878L878 422H877L877 432H875L875 428H873L873 424H871L871 429H870L870 421H869L869 433H868L868 430H867L867 428H865L865 429H862L862 419H859L859 430H856L856 434H853L853 424H851L851 434H849L849 430H846L846 434H844L844 439H843L843 437H840L840 426H837L837 433H835L835 412H834L834 436H833L833 412H832L832 414H830L830 422H828L828 434H826L826 433H824L824 409H823L823 432H822L822 433H821L821 416H820L820 426H819L819 423H818L818 434H817L817 430H816L816 432H815L815 433H814L814 423H812L812 423H809L809 427H807L807 432H804L804 425H802L802 433H800L800 431H799L799 429H797L797 429H796L796 405H794L794 425H792L792 423H789L789 431H788L788 430H786L786 430H784L784 421H783L783 429H781L781 433H779L779 409H778L778 437H776L776 433H774L774 431H772L772 426H770L770 431H768L768 431H766L766 428H764L764 430H762L762 434H759L759 420H757L757 415H756L756 428H755L755 434H754L754 426H753L753 425H751L751 437H748L748 436H747L747 439H746L746 431H745L745 411H743L743 431H742L742 436H741L741 429H739L739 432H736L736 431H734L734 419H732L732 425H730L730 430H728L728 437H726L726 416H725L725 430H723L723 433H722L722 428H719L719 427H717L717 419H715L715 429H713L713 432H711L711 431H710L710 439H709L709 429H707L707 430H705L705 435H704L704 414H703L703 433H701L701 439H700L700 436H699L699 435H697L697 429H696L696 434H694L694 434H693L693 439H691L691 436H688L688 433H685L685 424H683L683 433H681L681 421H680L680 434H678L678 437H676L676 437H675L675 429H673L673 438H671L671 431H670L670 436H668L668 437H667L667 433H665L665 434H664L664 432H663L663 435H662L662 428H660L660 426H658L658 429H656L656 425H655L655 425H653L653 424H651L651 437H648L648 427H646L646 427H643L643 427H641L641 420H640L640 433H638L638 431H637L637 432H635L635 407H634L634 418H633L633 432H631L631 428H628L628 421H625L625 426H624L624 432H621L621 433H620L620 436H618L618 426H615L615 413H613L613 431H611L611 433H609L609 427H607L607 416H606L606 427H603L603 426H601L601 432H600L600 426H599L599 434H597L597 408H595L595 435H592L592 422H590L590 406H589L589 422H587L587 428H586L586 414H584L584 437H582L582 438H581L581 413H580L580 436H578L578 422H577L577 431H574L574 426H572L572 434H571L571 428H569L569 437H566L566 433H564L564 436H563L563 429H560L560 431H558L558 424H555L555 433H553L553 435H551L551 435H548L548 431H546L546 429H545L545 434H543L543 424H541L541 424H540L540 414H538L538 410H537L537 429H535L535 423H532L532 431H529L529 430H528L528 432H525L525 435H523L523 429H521L521 432H519L519 431H516L516 429H514L514 426H513L513 428H512L512 434H510L510 431H508L508 432H506L506 430H504L504 431H503L503 424H502L502 414H501L501 427H498L498 431H496L496 432H494L494 424H493L493 432H491L491 431H489L489 436H487L487 434H484L484 419H482L482 435H481L481 434H478L478 426H476L476 432H474L474 428H472L472 436H470L470 428H468L468 432H466L466 432H464L464 430H462L462 425H461L461 413H460L460 433H458L458 406H456L456 433H453L453 426H450L450 429H448L448 428H445L445 425H442L442 441H441L441 434H440L440 433H439L439 429H436L436 433H434L434 433H432L432 429H431L431 430H429L429 429H428L428 433H425L425 422H422L422 435H421L421 423H418L418 431H415L415 436H414L414 431H413L413 431H412L412 432H411L411 419H410L410 430H409L409 427H407L407 433H406L406 396H405L405 397H403L403 400H401L401 401H398L398 390H397L397 401H394L394 397H392L392 401H391L391 396H389L389 399H387L387 396H385Z" fill="#0e8dcb"/>
<path d="M385 261H387L387 264H389L389 262H391L391 260H394L394 261H397L397 259H398L398 257H401L401 269H403L403 259H406L406 239H407L407 232H408L408 232H410L410 234H412L412 229H413L413 242H414L414 232H415L415 231H417L417 229H419L419 235H421L421 237H422L422 241H424L424 231H426L426 229H428L428 228H429L429 231H430L430 232H433L433 228H436L436 237H438L438 238H440L440 229H443L443 230H445L445 237H447L447 232H449L449 254H450L450 234H452L452 230H454L454 233H457L457 236H458L458 232H460L460 229H462L462 230H464L464 231H467L467 229H470L470 230H471L471 234H473L473 234H475L475 234H477L477 232H478L478 235H479L479 227H481L481 237H483L483 240H484L484 225H485L485 233H486L486 228H487L487 228H489L489 230H490L490 229H492L492 236H494L494 226H495L495 226H496L496 232H497L497 233H499L499 234H501L501 233H502L502 235H504L504 235H505L505 233H506L506 240H508L508 234H510L510 229H511L511 234H513L513 232H514L514 233H515L515 240H516L516 229H519L519 231H522L522 234H524L524 236H527L527 232H529L529 231H531L531 232H533L533 238H534L534 235H535L535 236H537L537 236H539L539 235H541L541 235H544L544 251H546L546 247H547L547 234H548L548 232H550L550 229H552L552 235H555L555 235H558L558 236H560L560 226H561L561 229H563L563 230H565L565 232H566L566 234H567L567 228H569L569 227H570L570 228H571L571 234H573L573 231H575L575 238H576L576 234H577L577 232H578L578 233H580L580 229H582L582 227H585L585 233H586L586 228H587L587 230H589L589 234H591L591 241H592L592 238H593L593 231H594L594 233H596L596 233H597L597 243H599L599 231H602L602 225H604L604 221H605L605 224H607L607 230H609L609 230H610L610 236H611L611 232H613L613 235H615L615 231H617L617 226H619L619 230H622L622 232H624L624 235H625L625 233H627L627 232H628L628 230H630L630 231H631L631 236H633L633 232H635L635 249H637L637 235H638L638 235H641L641 232H642L642 236H643L643 232H645L645 230H647L647 230H649L649 227H651L651 229H654L654 230H657L657 231H660L660 228H662L662 232H664L664 236H665L665 244H666L666 234H667L667 243H668L668 234H669L669 239H670L670 232H673L673 239H675L675 229H677L677 256H679L679 229H681L681 227H683L683 237H684L684 232H686L686 242H687L687 234H690L690 235H693L693 253H695L695 241H696L696 229H698L698 222H699L699 236H700L700 239H701L701 230H702L702 232H704L704 232H705L705 228H708L708 229H709L709 227H710L710 225H711L711 234H713L713 232H715L715 242H716L716 231H719L719 235H720L720 238H722L722 240H723L723 236H725L725 231H727L727 228H730L730 247H732L732 227H735L735 231H736L736 234H738L738 230H740L740 235H742L742 230H743L743 232H744L744 233H746L746 231H747L747 244H749L749 230H751L751 235H753L753 229H754L754 240H756L756 238H757L757 230H760L760 231H763L763 244H765L765 232H767L767 234H769L769 244H770L770 241H771L771 235H773L773 243H775L775 234H777L777 232H779L779 231H781L781 235H784L784 232H786L786 235H788L788 237H790L790 230H793L793 231H796L796 234H797L797 255H798L798 235H799L799 237H800L800 233H803L803 239H805L805 234H808L808 232H809L809 239H810L810 230H813L813 244H815L815 234H817L817 239H819L819 235H822L822 241H824L824 240H825L825 226H826L826 240H828L828 242H830L830 245H832L832 232H834L834 228H835L835 232H837L837 228H838L838 252H839L839 236H841L841 236H842L842 231H843L843 234H844L844 230H846L846 232H847L847 231H849L849 232H851L851 233H853L853 239H854L854 232H856L856 235H859L859 233H860L860 232H861L861 233H862L862 231H864L864 237H866L866 230H867L867 230H868L868 231H870L870 232H871L871 227H873L873 231H874L874 246H876L876 235H879L879 245H880L880 232H882L882 232H883L883 232H885L885 230H886L886 232H888L888 237H890L890 233H891L891 233H894L894 234H896L896 236H897L897 239H898L898 232H900L900 234H901L901 234H902L902 231H904L904 233H906L906 225H907L907 245H908L908 226H909L909 236H911L911 246H912L912 236H914L914 243H916L916 243H917L917 234H918L918 253H919L919 234H921L921 229H922L922 237H923L923 251H924L924 242H925L925 237H926L926 237H928L928 234H930L930 235H931L931 253H932L932 237H933L933 240H934L934 231H936L936 230H938L938 229H941L941 242H943L943 243H944L944 234H946L946 243H947L947 232H948L948 233H949L949 232H951L951 227H952L952 235H955L955 233H957L957 236H960L960 233H962L962 232H964L964 232H965L965 246H966L966 233H968L968 240H970L970 233H971L971 232H974L974 228H975L975 229H978L978 230H980L980 228H982L982 231H983L983 253H985L985 234H988L988 230H990L990 249H991L991 232H992L992 232H993L993 230H995L995 226H997L997 228H999L999 225H1002L1002 230H1004L1004 244H1005L1005 232H1006L1006 233H1008L1008 232H1010L1010 244H1012L1012 239H1014L1014 226H1015L1015 226H1017L1017 229H1018L1018 232H1020L1020 229H1023L1023 234H1024L1024 232H1025L1025 247H1027L1027 233H1028L1028 231H1031L1031 227H1034L1034 231H1037L1037 238H1038L1038 231H1040L1040 228H1042L1042 228H1043L1043 239H1045L1045 231H1046L1046 239H1047L1047 237H1049L1049 235H1051L1051 236H1054L1054 241H1055L1055 233H1058L1058 241H1060L1060 227H1061L1061 229H1062L1062 231H1064L1064 227H1067L1067 242H1069L1069 233H1071L1071 235H1073L1073 250H1074L1074 229H1076L1076 229H1077L1077 230H1079L1079 230H1082L1082 226H1083L1083 227H1084L1084 228H1087L1087 251H1089L1089 229H1091L1091 234H1093L1093 231H1094L1094 234H1096L1096 231H1099L1099 237H1100L1100 235H1101L1101 242H1103L1103 242H1104L1104 232H1106L1106 233H1107L1107 230H1108L1108 231H1110L1110 231H1111L1111 241H1113L1113 232H1115L1115 230H1117L1117 242H1118L1118 234H1121L1121 224H1122L1122 240H1123L1123 229H1126L1126 233H1129L1129 251H1130L1130 238H1132L1132 242H1133L1133 232H1135L1135 229H1138L1138 233H1139L1139 225H1140L1140 234H1143L1143 233H1145L1145 232H1147L1147 230H1150L1150 232H1152L1152 249H1153L1153 236H1155L1155 240H1157L1157 234H1158L1158 239H1160L1160 233H1163L1163 231H1164L1164 235H1165L1165 238H1167L1167 242H1168L1168 243H1169L1169 243H1171L1171 241H1172L1172 233H1175L1175 229H1177L1177 244H1179L1179 233H1181L1181 227H1182L1182 244H1183L1183 231H1185L1185 229H1187L1187 227H1190L1190 227H1192L1192 235H1193L1193 233H1195L1195 236H1197L1197 231H1198L1198 238H1199L1199 231H1201L1201 232H1203L1203 233H1206L1206 235H1209L1209 236H1211L1211 237H1213L1213 247H1214L1214 234H1216L1216 244H1217L1217 230H1218L1218 233H1221L1221 253H1222L1222 258H1224L1224 237H1226L1226 232H1228L1228 238H1231L1231 234H1233L1233 241H1235L1235 237H1236L1236 238H1237L1237 234H1240L1240 234H1241L1241 236H1244L1244 236H1246L1246 230H1248L1248 230H1250L1250 234H1253L1253 238H1254L1254 233H1256L1256 233H1258L1258 232H1260L1260 234H1263L1263 233H1264L1264 256H1265L1265 231H1267L1267 226H1269L1269 238H1270L1270 248H1271L1271 241H1273L1273 232H1276L1276 233H1277L1277 234H1279L1279 229H1281L1281 233H1283L1283 233H1285L1285 236H1287L1287 237H1288L1288 241H1290L1290 230H1291L1291 232H1293L1293 232H1295L1295 261H1296L1296 237H1299L1299 234H1301L1301 233H1302L1302 238H1305L1305 238H1307L1307 246H1308L1308 238H1311L1311 237H1312L1312 231H1315L1315 236H1316L1316 230H1318L1318 228H1319L1319 233H1321L1321 227H1323L1323 227H1324L1324 226H1327L1327 283H1328L1328 294H1329L1329 301H1330L1330 308H1331L1331 313H1332L1332 318H1333L1333 321H1334L1334 325H1335L1335 327H1336L1336 330H1337L1337 331H1338L1338 332H1339L1339 333H1340L1340 333H1341L1341 333H1342L1342 333H1343L1343 333H1344L1344 333H1345L1345 333H1346L1346 333H1347L1347 333H1348L1348 333H1349L1349 333H1350L1350 333H1351L1351 333H1352L1352 333H1353L1353 333H1354L1354 333H1355L1355 333H1356L1356 333H1357L1357 333H1358L1358 333H1359L1359 333H1360L1360 333H1361L1361 333H1362L1362 333H1363L1363 333H1364L1364 333H1365L1365 333H1366L1366 333H1367L1367 333H1368L1368 333H1369L1369 333H1370L1370 333H1371L1371 333H1372L1372 336H1371L1371 336H1370L1370 336H1369L1369 336H1368L1368 336H1367L1367 336H1366L1366 336H1365L1365 336H1364L1364 336H1363L1363 336H1362L1362 336H1361L1361 336H1360L1360 336H1359L1359 336H1358L1358 336H1357L1357 336H1356L1356 336H1355L1355 336H1354L1354 336H1353L1353 336H1352L1352 336H1351L1351 336H1350L1350 336H1349L1349 336H1348L1348 336H1347L1347 336H1346L1346 336H1345L1345 336H1344L1344 336H1343L1343 336H1342L1342 336H1341L1341 336H1340L1340 336H1339L1339 337H1338L1338 338H1337L1337 340H1336L1336 342H1335L1335 344H1334L1334 348H1333L1333 351H1332L1332 356H1331L1331 362H1330L1330 368H1329L1329 375H1328L1328 386H1327L1327 411H1326L1326 426H1324L1324 430H1322L1322 427H1320L1320 428H1318L1318 432H1315L1315 432H1314L1314 428H1313L1313 431H1312L1312 419H1310L1310 430H1307L1307 434H1304L1304 434H1301L1301 410H1299L1299 433H1298L1298 424H1295L1295 433H1293L1293 440H1292L1292 431H1289L1289 430H1288L1288 435H1285L1285 432H1283L1283 429H1282L1282 430H1279L1279 428H1276L1276 423H1274L1274 431H1272L1272 429H1271L1271 425H1269L1269 427H1266L1266 431H1264L1264 408H1263L1263 426H1261L1261 430H1258L1258 437H1257L1257 427H1255L1255 435H1253L1253 435H1251L1251 433H1249L1249 416H1247L1247 431H1245L1245 427H1243L1243 425H1241L1241 432H1239L1239 417H1237L1237 425H1234L1234 426H1233L1233 432H1232L1232 429H1231L1231 435H1228L1228 438H1225L1225 425H1223L1223 437H1222L1222 423H1220L1220 428H1218L1218 413H1216L1216 430H1214L1214 434H1212L1212 432H1210L1210 436H1207L1207 421H1206L1206 436H1204L1204 433H1202L1202 423H1199L1199 438H1198L1198 431H1197L1197 407H1195L1195 432H1193L1193 432H1191L1191 430H1188L1188 425H1186L1186 429H1185L1185 436H1183L1183 430H1181L1181 422H1179L1179 428H1178L1178 428H1175L1175 426H1173L1173 418H1172L1172 428H1169L1169 426H1168L1168 437H1165L1165 438H1163L1163 420H1162L1162 422H1159L1159 424H1157L1157 436H1155L1155 422H1152L1152 433H1150L1150 437H1148L1148 429H1145L1145 431H1142L1142 434H1140L1140 425H1138L1138 426H1135L1135 435H1133L1133 438H1132L1132 418H1131L1131 438H1129L1129 429H1126L1126 424H1125L1125 431H1124L1124 430H1121L1121 421H1119L1119 437H1118L1118 412H1116L1116 434H1114L1114 434H1111L1111 435H1109L1109 428H1107L1107 434H1106L1106 436H1104L1104 429H1101L1101 406H1100L1100 433H1099L1099 426H1096L1096 435H1094L1094 437H1092L1092 433H1091L1091 420H1089L1089 432H1087L1087 432H1085L1085 419H1083L1083 420H1082L1082 422H1080L1080 434H1078L1078 435H1075L1075 431H1073L1073 420H1070L1070 433H1068L1068 409H1067L1067 430H1064L1064 430H1062L1062 427H1060L1060 432H1058L1058 428H1056L1056 429H1055L1055 413H1054L1054 423H1052L1052 436H1050L1050 433H1049L1049 437H1047L1047 428H1046L1046 433H1045L1045 436H1044L1044 440H1043L1043 418H1041L1041 434H1039L1039 415H1037L1037 435H1034L1034 429H1032L1032 424H1029L1029 433H1028L1028 422H1025L1025 435H1024L1024 435H1022L1022 420H1021L1021 427H1018L1018 436H1017L1017 434H1014L1014 419H1011L1011 429H1009L1009 432H1008L1008 434H1006L1006 432H1005L1005 428H1003L1003 414H1001L1001 424H999L999 405H998L998 430H997L997 435H994L994 430H993L993 426H991L991 434H990L990 427H987L987 435H985L985 428H982L982 419H980L980 435H979L979 428H978L978 430H977L977 431H975L975 439H973L973 429H970L970 432H969L969 429H966L966 432H964L964 431H961L961 431H958L958 434H957L957 436H954L954 424H952L952 431H950L950 433H948L948 431H946L946 433H945L945 436H942L942 430H941L941 434H939L939 434H936L936 417H935L935 435H934L934 427H931L931 432H929L929 436H927L927 431H926L926 434H924L924 422H921L921 433H920L920 428H918L918 429H916L916 434H914L914 435H913L913 432H912L912 435H910L910 426H909L909 422H907L907 428H904L904 433H903L903 423H902L902 432H901L901 429H899L899 427H897L897 407H896L896 434H895L895 436H892L892 434H889L889 432H887L887 437H884L884 433H883L883 422H880L880 425H878L878 422H877L877 432H875L875 428H873L873 424H871L871 429H870L870 421H869L869 433H868L868 430H867L867 428H865L865 429H862L862 419H859L859 430H856L856 434H853L853 424H851L851 434H849L849 430H846L846 434H844L844 439H843L843 437H840L840 426H837L837 433H835L835 412H834L834 436H833L833 412H832L832 414H830L830 422H828L828 434H826L826 433H824L824 409H823L823 432H822L822 433H821L821 416H820L820 426H819L819 423H818L818 434H817L817 430H816L816 432H815L815 433H814L814 423H812L812 423H809L809 427H807L807 432H804L804 425H802L802 433H800L800 431H799L799 429H797L797 429H796L796 405H794L794 425H792L792 423H789L789 431H788L788 430H786L786 430H784L784 421H783L783 429H781L781 433H779L779 409H778L778 437H776L776 433H774L774 431H772L772 426H770L770 431H768L768 431H766L766 428H764L764 430H762L762 434H759L759 420H757L757 415H756L756 428H755L755 434H754L754 426H753L753 425H751L751 437H748L748 436H747L747 439H746L746 431H745L745 411H743L743 431H742L742 436H741L741 429H739L739 432H736L736 431H734L734 419H732L732 425H730L730 430H728L728 437H726L726 416H725L725 430H723L723 433H722L722 428H719L719 427H717L717 419H715L715 429H713L713 432H711L711 431H710L710 439H709L709 429H707L707 430H705L705 435H704L704 414H703L703 433H701L701 439H700L700 436H699L699 435H697L697 429H696L696 434H694L694 434H693L693 439H691L691 436H688L688 433H685L685 424H683L683 433H681L681 421H680L680 434H678L678 437H676L676 437H675L675 429H673L673 438H671L671 431H670L670 436H668L668 437H667L667 433H665L665 434H664L664 432H663L663 435H662L662 428H660L660 426H658L658 429H656L656 425H655L655 425H653L653 424H651L651 437H648L648 427H646L646 427H643L643 427H641L641 420H640L640 433H638L638 431H637L637 432H635L635 407H634L634 418H633L633 432H631L631 428H628L628 421H625L625 426H624L624 432H621L621 433H620L620 436H618L618 426H615L615 413H613L613 431H611L611 433H609L609 427H607L607 416H606L606 427H603L603 426H601L601 432H600L600 426H599L599 434H597L597 408H595L595 435H592L592 422H590L590 406H589L589 422H587L587 428H586L586 414H584L584 437H582L582 438H581L581 413H580L580 436H578L578 422H577L577 431H574L574 426H572L572 434H571L571 428H569L569 437H566L566 433H564L564 436H563L563 429H560L560 431H558L558 424H555L555 433H553L553 435H551L551 435H548L548 431H546L546 429H545L545 434H543L543 424H541L541 424H540L540 414H538L538 410H537L537 429H535L535 423H532L532 431H529L529 430H528L528 432H525L525 435H523L523 429H521L521 432H519L519 431H516L516 429H514L514 426H513L513 428H512L512 434H510L510 431H508L508 432H506L506 430H504L504 431H503L503 424H502L502 414H501L501 427H498L498 431H496L496 432H494L494 424H493L493 432H491L491 431H489L489 436H487L487 434H484L484 419H482L482 435H481L481 434H478L478 426H476L476 432H474L474 428H472L472 436H470L470 428H468L468 432H466L466 432H464L464 430H462L462 425H461L461 413H460L460 433H458L458 406H456L456 433H453L453 426H450L450 429H448L448 428H445L445 425H442L442 441H441L441 434H440L440 433H439L439 429H436L436 433H434L434 433H432L432 429H431L431 430H429L429 429H428L428 433H425L425 422H422L422 435H421L421 423H418L418 431H415L415 436H414L414 431H413L413 431H412L412 432H411L411 419H410L410 430H409L409 427H407L407 433H406L406 396H405L405 397H403L403 400H401L401 401H398L398 390H397L397 401H394L394 397H392L392 401H391L391 396H389L389 399H387L387 396H385Z" fill="#51aee2" clip-path="url(#selclip)"/>
<rect x="385" y="466" width="987" height="7.5" fill="#b4c4d9"/>
<rect x="385" y="468.5" width="987" height="2.5" fill="#8fa6bd"/>
<rect x="385" y="473.5" width="987" height="266" fill="#000"/>
<rect x="493" y="473.5" width="749" height="266" fill="#4d5964"/>
<rect x="385" y="484.2" width="987" height="1.6" fill="#33506a"/>
<rect x="493" y="484.2" width="749" height="1.6" fill="#6f89a6"/>
<rect x="385" y="729" width="987" height="1.6" fill="#33506a"/>
<rect x="493" y="729" width="749" height="1.6" fill="#6f89a6"/>
<path d="M385 530.4H1372" stroke="#1f4458" stroke-width="1.3" stroke-dasharray="5 4"/>
<path d="M385 684.8H1372" stroke="#1f4458" stroke-width="1.3" stroke-dasharray="5 4"/>
<path d="M385 568.9H1372" stroke="#1f4458" stroke-width="1.3" stroke-dasharray="5 4"/>
<path d="M385 646.3H1372" stroke="#1f4458" stroke-width="1.3" stroke-dasharray="5 4"/>
<path d="M385 607.6H1372" stroke="#1f4458" stroke-width="1.3" stroke-dasharray="5 4"/>
<path d="M473.9 473.5V739.5" stroke="#1f4458" stroke-width="1.4" stroke-dasharray="5 4"/>
<path d="M561.1 473.5V739.5" stroke="#667a8a" stroke-width="1.4" stroke-dasharray="5 4"/>
<path d="M648.3 473.5V739.5" stroke="#667a8a" stroke-width="1.4" stroke-dasharray="5 4"/>
<path d="M735.5 473.5V739.5" stroke="#667a8a" stroke-width="1.4" stroke-dasharray="5 4"/>
<path d="M822.8 473.5V739.5" stroke="#667a8a" stroke-width="1.4" stroke-dasharray="5 4"/>
<path d="M910 473.5V739.5" stroke="#667a8a" stroke-width="1.4" stroke-dasharray="5 4"/>
<path d="M997.2 473.5V739.5" stroke="#667a8a" stroke-width="1.4" stroke-dasharray="5 4"/>
<path d="M1084.4 473.5V739.5" stroke="#667a8a" stroke-width="1.4" stroke-dasharray="5 4"/>
<path d="M1171.6 473.5V739.5" stroke="#667a8a" stroke-width="1.4" stroke-dasharray="5 4"/>
<path d="M1258.8 473.5V739.5" stroke="#1f4458" stroke-width="1.4" stroke-dasharray="5 4"/>
<path d="M1346 473.5V739.5" stroke="#1f4458" stroke-width="1.4" stroke-dasharray="5 4"/>
<path d="M385 534H387L387 531H389L389 530H392L392 537H394L394 534H397L397 532H399L399 534H402L402 535H404L404 534H406L406 509H409L409 520H411L411 511H412L412 506H414L414 512H416L416 508H418L418 503H420L420 506H422L422 502H425L425 510H427L427 520H428L428 506H431L431 516H432L432 507H434L434 510H435L435 502H436L436 505H439L439 506H440L440 506H442L442 514H443L443 505H446L446 504H447L447 508H449L449 507H452L452 507H453L453 502H455L455 508H457L457 506H460L460 506H461L461 509H462L462 510H464L464 505H465L465 506H467L467 507H469L469 503H471L471 505H474L474 507H475L475 513H477L477 508H478L478 504H481L481 503H483L483 504H485L485 509H487L487 501H489L489 502H490L490 502H492L492 508H493L493 514H494L494 506H495L495 513H497L497 533H498L498 509H500L500 511H502L502 505H504L504 505H506L506 502H507L507 502H508L508 508H510L510 505H513L513 504H516L516 506H517L517 502H519L519 504H521L521 503H523L523 509H524L524 508H526L526 501H528L528 504H530L530 499H531L531 513H533L533 502H535L535 503H537L537 504H538L538 506H540L540 518H541L541 519H542L542 499H543L543 505H545L545 506H547L547 504H549L549 511H551L551 504H554L554 505H557L557 505H558L558 502H561L561 503H562L562 509H563L563 509H565L565 506H567L567 515H568L568 517H569L569 505H571L571 511H573L573 514H574L574 511H577L577 521H579L579 503H580L580 508H582L582 506H583L583 509H585L585 504H587L587 529H588L588 504H590L590 502H591L591 503H592L592 504H594L594 503H597L597 503H598L598 506H600L600 505H602L602 506H603L603 502H604L604 504H606L606 510H607L607 511H609L609 509H610L610 505H611L611 514H612L612 508H613L613 515H615L615 512H616L616 511H617L617 504H619L619 514H621L621 506H624L624 503H625L625 496H626L626 500H629L629 523H630L630 510H631L631 505H634L634 514H635L635 512H637L637 508H638L638 508H640L640 506H641L641 508H643L643 507H644L644 507H647L647 523H649L649 511H651L651 508H652L652 507H654L654 501H655L655 504H657L657 504H658L658 508H659L659 514H661L661 501H664L664 507H666L666 503H668L668 508H670L670 502H672L672 506H674L674 506H675L675 507H677L677 512H679L679 506H682L682 508H684L684 501H685L685 505H687L687 512H688L688 515H690L690 507H692L692 506H694L694 506H696L696 510H697L697 505H699L699 506H700L700 506H702L702 526H704L704 506H706L706 504H708L708 509H709L709 514H711L711 504H713L713 509H715L715 511H716L716 506H717L717 514H718L718 502H719L719 502H720L720 507H721L721 504H722L722 503H725L725 496H726L726 506H727L727 506H728L728 510H729L729 501H732L732 503H734L734 516H735L735 505H737L737 505H738L738 509H740L740 503H741L741 504H744L744 505H746L746 499H747L747 507H748L748 505H750L750 505H752L752 507H754L754 504H756L756 507H759L759 502H760L760 501H763L763 503H765L765 505H767L767 509H769L769 509H770L770 507H771L771 505H773L773 510H774L774 505H777L777 501H778L778 519H779L779 502H781L781 509H782L782 506H783L783 507H785L785 511H786L786 517H788L788 503H790L790 505H792L792 512H794L794 511H795L795 505H796L796 503H798L798 500H799L799 503H800L800 504H802L802 502H804L804 504H805L805 505H806L806 503H808L808 507H810L810 500H811L811 502H812L812 507H813L813 508H815L815 504H816L816 505H818L818 504H819L819 509H820L820 501H821L821 512H822L822 505H825L825 503H828L828 503H829L829 503H832L832 519H834L834 502H836L836 499H837L837 503H839L839 503H841L841 502H842L842 507H844L844 509H846L846 504H848L848 509H849L849 534H850L850 505H852L852 504H855L855 531H856L856 508H857L857 510H859L859 508H861L861 513H862L862 505H863L863 508H864L864 509H866L866 507H869L869 509H871L871 510H873L873 505H876L876 503H877L877 510H878L878 503H880L880 504H882L882 505H885L885 517H887L887 504H888L888 495H889L889 499H891L891 501H894L894 502H897L897 502H899L899 506H901L901 520H902L902 508H903L903 505H905L905 507H908L908 536H909L909 505H911L911 507H913L913 508H915L915 507H916L916 504H919L919 508H921L921 509H923L923 509H925L925 519H926L926 502H929L929 504H932L932 500H934L934 504H935L935 503H938L938 519H940L940 508H943L943 504H944L944 509H947L947 500H949L949 502H952L952 506H954L954 509H955L955 513H956L956 507H958L958 519H960L960 504H962L962 511H963L963 511H964L964 514H965L965 506H966L966 504H968L968 505H970L970 503H972L972 503H975L975 516H977L977 517H978L978 506H980L980 500H982L982 501H984L984 516H986L986 503H988L988 511H990L990 504H992L992 504H994L994 504H996L996 505H998L998 505H1001L1001 504H1003L1003 505H1005L1005 511H1006L1006 505H1008L1008 525H1009L1009 505H1011L1011 501H1012L1012 510H1013L1013 509H1014L1014 508H1017L1017 515H1018L1018 504H1020L1020 506H1021L1021 509H1023L1023 508H1025L1025 507H1027L1027 510H1029L1029 512H1031L1031 504H1033L1033 504H1035L1035 504H1037L1037 505H1038L1038 514H1040L1040 512H1042L1042 505H1043L1043 520H1044L1044 504H1045L1045 502H1047L1047 510H1049L1049 506H1050L1050 505H1053L1053 506H1055L1055 504H1058L1058 516H1059L1059 506H1061L1061 504H1063L1063 510H1065L1065 501H1067L1067 522H1068L1068 506H1070L1070 509H1072L1072 515H1073L1073 506H1075L1075 512H1077L1077 505H1078L1078 503H1079L1079 502H1081L1081 499H1084L1084 503H1086L1086 505H1088L1088 501H1089L1089 511H1090L1090 510H1092L1092 520H1094L1094 518H1096L1096 503H1098L1098 528H1100L1100 509H1103L1103 522H1104L1104 502H1105L1105 507H1107L1107 504H1108L1108 511H1110L1110 506H1113L1113 505H1116L1116 519H1118L1118 506H1121L1121 506H1123L1123 508H1124L1124 502H1126L1126 507H1127L1127 528H1129L1129 503H1130L1130 504H1132L1132 506H1134L1134 505H1136L1136 506H1137L1137 513H1138L1138 507H1140L1140 497H1141L1141 505H1143L1143 502H1144L1144 505H1145L1145 507H1146L1146 511H1147L1147 506H1149L1149 530H1150L1150 506H1152L1152 509H1153L1153 507H1156L1156 507H1159L1159 503H1162L1162 512H1163L1163 510H1165L1165 507H1167L1167 512H1168L1168 504H1171L1171 504H1173L1173 503H1174L1174 503H1175L1175 506H1176L1176 508H1177L1177 509H1179L1179 524H1181L1181 503H1183L1183 502H1186L1186 505H1188L1188 516H1189L1189 507H1192L1192 508H1194L1194 509H1196L1196 505H1197L1197 508H1199L1199 509H1201L1201 530H1202L1202 504H1203L1203 513H1205L1205 513H1206L1206 507H1208L1208 519H1209L1209 505H1211L1211 505H1214L1214 506H1217L1217 503H1219L1219 501H1221L1221 517H1222L1222 508H1224L1224 501H1225L1225 505H1228L1228 501H1230L1230 504H1231L1231 504H1232L1232 511H1234L1234 506H1236L1236 503H1237L1237 505H1239L1239 501H1240L1240 511H1241L1241 531H1243L1243 507H1245L1245 508H1247L1247 508H1249L1249 504H1251L1251 503H1254L1254 495H1255L1255 527H1257L1257 505H1258L1258 502H1260L1260 505H1261L1261 514H1262L1262 518H1263L1263 508H1264L1264 505H1266L1266 520H1267L1267 503H1269L1269 510H1271L1271 500H1272L1272 505H1273L1273 510H1275L1275 511H1277L1277 527H1279L1279 504H1281L1281 521H1283L1283 508H1286L1286 506H1289L1289 516H1290L1290 508H1291L1291 507H1293L1293 514H1295L1295 507H1298L1298 507H1300L1300 508H1301L1301 506H1302L1302 514H1303L1303 505H1305L1305 506H1307L1307 501H1308L1308 505H1310L1310 517H1311L1311 508H1312L1312 507H1314L1314 520H1315L1315 514H1316L1316 515H1317L1317 500H1318L1318 503H1319L1319 502H1320L1320 503H1322L1322 505H1324L1324 514H1326L1326 532H1327L1327 556H1328L1328 567H1329L1329 574H1330L1330 581H1331L1331 586H1332L1332 591H1333L1333 594H1334L1334 598H1335L1335 600H1336L1336 603H1337L1337 604H1338L1338 605H1339L1339 606H1340L1340 606H1341L1341 606H1342L1342 606H1343L1343 606H1344L1344 606H1345L1345 606H1346L1346 606H1347L1347 606H1348L1348 606H1349L1349 606H1350L1350 606H1351L1351 606H1352L1352 606H1353L1353 606H1354L1354 606H1355L1355 606H1356L1356 606H1357L1357 606H1358L1358 606H1359L1359 606H1360L1360 606H1361L1361 606H1362L1362 606H1363L1363 606H1364L1364 606H1365L1365 606H1366L1366 606H1367L1367 606H1368L1368 606H1369L1369 606H1370L1370 606H1371L1371 606H1372L1372 609H1371L1371 609H1370L1370 609H1369L1369 609H1368L1368 609H1367L1367 609H1366L1366 609H1365L1365 609H1364L1364 609H1363L1363 609H1362L1362 609H1361L1361 609H1360L1360 609H1359L1359 609H1358L1358 609H1357L1357 609H1356L1356 609H1355L1355 609H1354L1354 609H1353L1353 609H1352L1352 609H1351L1351 609H1350L1350 609H1349L1349 609H1348L1348 609H1347L1347 609H1346L1346 609H1345L1345 609H1344L1344 609H1343L1343 609H1342L1342 609H1341L1341 609H1340L1340 609H1339L1339 610H1338L1338 611H1337L1337 612H1336L1336 615H1335L1335 617H1334L1334 621H1333L1333 624H1332L1332 629H1331L1331 635H1330L1330 641H1329L1329 648H1328L1328 659H1327L1327 683H1326L1326 706H1324L1324 710H1323L1323 700H1321L1321 704H1318L1318 708H1315L1315 702H1313L1313 710H1311L1311 710H1310L1310 708H1308L1308 704H1307L1307 703H1305L1305 702H1304L1304 707H1303L1303 692H1301L1301 702H1300L1300 696H1298L1298 709H1297L1297 711H1296L1296 693H1293L1293 704H1291L1291 708H1290L1290 704H1288L1288 701H1286L1286 704H1285L1285 694H1284L1284 703H1282L1282 708H1281L1281 707H1280L1280 689H1278L1278 695H1276L1276 704H1275L1275 705H1272L1272 695H1270L1270 703H1268L1268 704H1267L1267 682H1266L1266 705H1263L1263 711H1261L1261 706H1259L1259 692H1257L1257 690H1256L1256 698H1253L1253 697H1251L1251 708H1250L1250 703H1248L1248 697H1246L1246 700H1244L1244 700H1242L1242 711H1241L1241 700H1240L1240 705H1238L1238 705H1236L1236 706H1234L1234 682H1232L1232 697H1230L1230 706H1228L1228 699H1226L1226 686H1225L1225 704H1223L1223 684H1222L1222 709H1221L1221 705H1218L1218 699H1215L1215 706H1213L1213 705H1211L1211 702H1209L1209 702H1207L1207 700H1205L1205 707H1203L1203 705H1200L1200 709H1199L1199 705H1197L1197 707H1195L1195 699H1194L1194 697H1192L1192 691H1189L1189 692H1188L1188 699H1186L1186 698H1183L1183 707H1182L1182 708H1181L1181 702H1180L1180 708H1178L1178 688H1177L1177 700H1174L1174 699H1171L1171 696H1169L1169 709H1168L1168 703H1165L1165 707H1164L1164 702H1162L1162 701H1159L1159 705H1156L1156 702H1154L1154 709H1153L1153 697H1152L1152 708H1150L1150 704H1148L1148 703H1146L1146 694H1145L1145 701H1144L1144 714H1143L1143 712H1142L1142 707H1140L1140 709H1137L1137 702H1136L1136 703H1134L1134 703H1132L1132 706H1129L1129 711H1128L1128 713H1127L1127 705H1125L1125 703H1122L1122 705H1120L1120 702H1117L1117 700H1114L1114 703H1112L1112 696H1110L1110 695H1108L1108 699H1107L1107 684H1106L1106 700H1104L1104 706H1102L1102 702H1099L1099 709H1097L1097 709H1096L1096 706H1095L1095 708H1094L1094 694H1092L1092 705H1090L1090 685H1089L1089 707H1087L1087 705H1086L1086 691H1085L1085 712H1084L1084 703H1082L1082 707H1080L1080 707H1078L1078 680H1077L1077 701H1074L1074 703H1073L1073 700H1070L1070 707H1068L1068 705H1066L1066 707H1064L1064 710H1061L1061 703H1059L1059 701H1057L1057 705H1056L1056 704H1053L1053 705H1051L1051 706H1050L1050 709H1048L1048 697H1046L1046 698H1044L1044 705H1042L1042 703H1040L1040 704H1038L1038 702H1035L1035 698H1034L1034 697H1032L1032 681H1031L1031 687H1029L1029 708H1027L1027 710H1024L1024 708H1021L1021 703H1018L1018 706H1016L1016 704H1014L1014 705H1012L1012 707H1010L1010 691H1009L1009 709H1008L1008 709H1006L1006 690H1005L1005 699H1002L1002 708H1001L1001 689H1000L1000 706H997L997 693H996L996 705H994L994 702H993L993 686H992L992 702H990L990 697H988L988 707H987L987 695H986L986 681H985L985 701H982L982 702H979L979 705H977L977 704H975L975 704H974L974 705H972L972 708H971L971 707H968L968 703H966L966 701H964L964 694H962L962 704H961L961 703H960L960 697H959L959 689H958L958 700H955L955 692H954L954 706H952L952 702H951L951 702H948L948 706H946L946 706H944L944 686H942L942 707H941L941 702H939L939 701H937L937 703H936L936 701H933L933 704H931L931 703H928L928 696H927L927 708H924L924 703H923L923 708H921L921 704H919L919 706H918L918 707H917L917 698H915L915 708H912L912 709H909L909 699H907L907 709H906L906 711H904L904 705H902L902 710H901L901 700H899L899 703H898L898 706H897L897 711H895L895 704H893L893 701H891L891 701H889L889 695H887L887 696H886L886 704H884L884 705H881L881 704H880L880 703H879L879 704H876L876 706H874L874 703H871L871 702H870L870 702H868L868 705H865L865 696H863L863 708H862L862 693H861L861 694H859L859 704H857L857 710H856L856 710H855L855 705H853L853 699H850L850 703H849L849 702H848L848 702H846L846 685H844L844 700H842L842 705H841L841 706H838L838 707H836L836 709H835L835 694H832L832 701H829L829 712H828L828 706H827L827 689H826L826 709H824L824 693H823L823 708H821L821 703H819L819 698H817L817 707H816L816 702H814L814 707H813L813 705H812L812 706H810L810 707H808L808 695H806L806 694H805L805 707H802L802 692H800L800 698H799L799 703H797L797 705H796L796 704H794L794 701H791L791 708H790L790 696H789L789 707H788L788 694H787L787 693H786L786 705H784L784 703H782L782 693H781L781 705H778L778 706H775L775 685H773L773 706H771L771 695H769L769 686H768L768 705H767L767 704H764L764 694H762L762 701H761L761 702H760L760 698H758L758 709H757L757 709H754L754 711H753L753 709H751L751 707H750L750 708H747L747 690H746L746 708H745L745 706H744L744 705H743L743 691H741L741 701H739L739 710H738L738 701H735L735 679H733L733 678H732L732 706H730L730 707H728L728 706H726L726 696H723L723 683H721L721 701H719L719 697H717L717 692H715L715 683H713L713 695H711L711 706H709L709 702H708L708 699H705L705 706H703L703 696H701L701 706H700L700 702H699L699 682H698L698 686H697L697 704H695L695 706H692L692 706H691L691 709H690L690 694H689L689 705H687L687 707H684L684 698H682L682 708H680L680 711H679L679 710H677L677 696H674L674 699H673L673 705H671L671 697H670L670 700H667L667 695H665L665 696H664L664 705H662L662 696H661L661 703H658L658 705H657L657 705H655L655 707H654L654 696H652L652 710H650L650 700H649L649 707H646L646 709H645L645 687H644L644 711H642L642 700H640L640 706H637L637 702H636L636 707H635L635 705H633L633 709H631L631 709H630L630 708H628L628 706H627L627 707H626L626 703H624L624 691H622L622 697H620L620 698H619L619 694H618L618 709H616L616 699H615L615 706H612L612 706H610L610 707H609L609 704H607L607 708H605L605 696H603L603 698H602L602 706H600L600 706H599L599 703H597L597 701H595L595 702H594L594 694H591L591 695H588L588 705H586L586 705H584L584 696H581L581 708H580L580 678H579L579 704H577L577 707H576L576 684H575L575 704H573L573 704H572L572 700H570L570 696H567L567 705H565L565 692H563L563 710H562L562 707H560L560 707H558L558 705H556L556 707H553L553 701H550L550 705H547L547 698H545L545 698H543L543 702H542L542 709H541L541 706H540L540 695H539L539 705H538L538 707H537L537 691H535L535 702H533L533 702H532L532 706H530L530 699H527L527 700H525L525 708H522L522 705H520L520 701H518L518 709H516L516 706H513L513 702H512L512 701H510L510 700H509L509 704H508L508 710H507L507 699H504L504 697H502L502 701H501L501 700H498L498 704H496L496 705H495L495 702H493L493 700H491L491 706H489L489 693H488L488 707H485L485 687H484L484 706H481L481 704H478L478 711H477L477 710H475L475 706H473L473 706H471L471 702H469L469 690H468L468 698H467L467 696H466L466 704H465L465 696H464L464 689H463L463 702H461L461 702H458L458 703H457L457 690H456L456 707H454L454 703H453L453 692H450L450 702H448L448 691H447L447 701H445L445 693H444L444 694H443L443 710H440L440 707H437L437 705H435L435 700H432L432 710H431L431 705H429L429 701H427L427 681H425L425 699H424L424 687H423L423 704H420L420 710H417L417 694H416L416 704H415L415 709H413L413 702H410L410 711H408L408 699H406L406 673H404L404 671H401L401 672H399L399 673H396L396 671H394L394 673H393L393 672H391L391 670H390L390 674H389L389 672H388L388 659H386L386 669H385Z" fill="#0e8dcb"/>
<path d="M385 534H387L387 531H389L389 530H392L392 537H394L394 534H397L397 532H399L399 534H402L402 535H404L404 534H406L406 509H409L409 520H411L411 511H412L412 506H414L414 512H416L416 508H418L418 503H420L420 506H422L422 502H425L425 510H427L427 520H428L428 506H431L431 516H432L432 507H434L434 510H435L435 502H436L436 505H439L439 506H440L440 506H442L442 514H443L443 505H446L446 504H447L447 508H449L449 507H452L452 507H453L453 502H455L455 508H457L457 506H460L460 506H461L461 509H462L462 510H464L464 505H465L465 506H467L467 507H469L469 503H471L471 505H474L474 507H475L475 513H477L477 508H478L478 504H481L481 503H483L483 504H485L485 509H487L487 501H489L489 502H490L490 502H492L492 508H493L493 514H494L494 506H495L495 513H497L497 533H498L498 509H500L500 511H502L502 505H504L504 505H506L506 502H507L507 502H508L508 508H510L510 505H513L513 504H516L516 506H517L517 502H519L519 504H521L521 503H523L523 509H524L524 508H526L526 501H528L528 504H530L530 499H531L531 513H533L533 502H535L535 503H537L537 504H538L538 506H540L540 518H541L541 519H542L542 499H543L543 505H545L545 506H547L547 504H549L549 511H551L551 504H554L554 505H557L557 505H558L558 502H561L561 503H562L562 509H563L563 509H565L565 506H567L567 515H568L568 517H569L569 505H571L571 511H573L573 514H574L574 511H577L577 521H579L579 503H580L580 508H582L582 506H583L583 509H585L585 504H587L587 529H588L588 504H590L590 502H591L591 503H592L592 504H594L594 503H597L597 503H598L598 506H600L600 505H602L602 506H603L603 502H604L604 504H606L606 510H607L607 511H609L609 509H610L610 505H611L611 514H612L612 508H613L613 515H615L615 512H616L616 511H617L617 504H619L619 514H621L621 506H624L624 503H625L625 496H626L626 500H629L629 523H630L630 510H631L631 505H634L634 514H635L635 512H637L637 508H638L638 508H640L640 506H641L641 508H643L643 507H644L644 507H647L647 523H649L649 511H651L651 508H652L652 507H654L654 501H655L655 504H657L657 504H658L658 508H659L659 514H661L661 501H664L664 507H666L666 503H668L668 508H670L670 502H672L672 506H674L674 506H675L675 507H677L677 512H679L679 506H682L682 508H684L684 501H685L685 505H687L687 512H688L688 515H690L690 507H692L692 506H694L694 506H696L696 510H697L697 505H699L699 506H700L700 506H702L702 526H704L704 506H706L706 504H708L708 509H709L709 514H711L711 504H713L713 509H715L715 511H716L716 506H717L717 514H718L718 502H719L719 502H720L720 507H721L721 504H722L722 503H725L725 496H726L726 506H727L727 506H728L728 510H729L729 501H732L732 503H734L734 516H735L735 505H737L737 505H738L738 509H740L740 503H741L741 504H744L744 505H746L746 499H747L747 507H748L748 505H750L750 505H752L752 507H754L754 504H756L756 507H759L759 502H760L760 501H763L763 503H765L765 505H767L767 509H769L769 509H770L770 507H771L771 505H773L773 510H774L774 505H777L777 501H778L778 519H779L779 502H781L781 509H782L782 506H783L783 507H785L785 511H786L786 517H788L788 503H790L790 505H792L792 512H794L794 511H795L795 505H796L796 503H798L798 500H799L799 503H800L800 504H802L802 502H804L804 504H805L805 505H806L806 503H808L808 507H810L810 500H811L811 502H812L812 507H813L813 508H815L815 504H816L816 505H818L818 504H819L819 509H820L820 501H821L821 512H822L822 505H825L825 503H828L828 503H829L829 503H832L832 519H834L834 502H836L836 499H837L837 503H839L839 503H841L841 502H842L842 507H844L844 509H846L846 504H848L848 509H849L849 534H850L850 505H852L852 504H855L855 531H856L856 508H857L857 510H859L859 508H861L861 513H862L862 505H863L863 508H864L864 509H866L866 507H869L869 509H871L871 510H873L873 505H876L876 503H877L877 510H878L878 503H880L880 504H882L882 505H885L885 517H887L887 504H888L888 495H889L889 499H891L891 501H894L894 502H897L897 502H899L899 506H901L901 520H902L902 508H903L903 505H905L905 507H908L908 536H909L909 505H911L911 507H913L913 508H915L915 507H916L916 504H919L919 508H921L921 509H923L923 509H925L925 519H926L926 502H929L929 504H932L932 500H934L934 504H935L935 503H938L938 519H940L940 508H943L943 504H944L944 509H947L947 500H949L949 502H952L952 506H954L954 509H955L955 513H956L956 507H958L958 519H960L960 504H962L962 511H963L963 511H964L964 514H965L965 506H966L966 504H968L968 505H970L970 503H972L972 503H975L975 516H977L977 517H978L978 506H980L980 500H982L982 501H984L984 516H986L986 503H988L988 511H990L990 504H992L992 504H994L994 504H996L996 505H998L998 505H1001L1001 504H1003L1003 505H1005L1005 511H1006L1006 505H1008L1008 525H1009L1009 505H1011L1011 501H1012L1012 510H1013L1013 509H1014L1014 508H1017L1017 515H1018L1018 504H1020L1020 506H1021L1021 509H1023L1023 508H1025L1025 507H1027L1027 510H1029L1029 512H1031L1031 504H1033L1033 504H1035L1035 504H1037L1037 505H1038L1038 514H1040L1040 512H1042L1042 505H1043L1043 520H1044L1044 504H1045L1045 502H1047L1047 510H1049L1049 506H1050L1050 505H1053L1053 506H1055L1055 504H1058L1058 516H1059L1059 506H1061L1061 504H1063L1063 510H1065L1065 501H1067L1067 522H1068L1068 506H1070L1070 509H1072L1072 515H1073L1073 506H1075L1075 512H1077L1077 505H1078L1078 503H1079L1079 502H1081L1081 499H1084L1084 503H1086L1086 505H1088L1088 501H1089L1089 511H1090L1090 510H1092L1092 520H1094L1094 518H1096L1096 503H1098L1098 528H1100L1100 509H1103L1103 522H1104L1104 502H1105L1105 507H1107L1107 504H1108L1108 511H1110L1110 506H1113L1113 505H1116L1116 519H1118L1118 506H1121L1121 506H1123L1123 508H1124L1124 502H1126L1126 507H1127L1127 528H1129L1129 503H1130L1130 504H1132L1132 506H1134L1134 505H1136L1136 506H1137L1137 513H1138L1138 507H1140L1140 497H1141L1141 505H1143L1143 502H1144L1144 505H1145L1145 507H1146L1146 511H1147L1147 506H1149L1149 530H1150L1150 506H1152L1152 509H1153L1153 507H1156L1156 507H1159L1159 503H1162L1162 512H1163L1163 510H1165L1165 507H1167L1167 512H1168L1168 504H1171L1171 504H1173L1173 503H1174L1174 503H1175L1175 506H1176L1176 508H1177L1177 509H1179L1179 524H1181L1181 503H1183L1183 502H1186L1186 505H1188L1188 516H1189L1189 507H1192L1192 508H1194L1194 509H1196L1196 505H1197L1197 508H1199L1199 509H1201L1201 530H1202L1202 504H1203L1203 513H1205L1205 513H1206L1206 507H1208L1208 519H1209L1209 505H1211L1211 505H1214L1214 506H1217L1217 503H1219L1219 501H1221L1221 517H1222L1222 508H1224L1224 501H1225L1225 505H1228L1228 501H1230L1230 504H1231L1231 504H1232L1232 511H1234L1234 506H1236L1236 503H1237L1237 505H1239L1239 501H1240L1240 511H1241L1241 531H1243L1243 507H1245L1245 508H1247L1247 508H1249L1249 504H1251L1251 503H1254L1254 495H1255L1255 527H1257L1257 505H1258L1258 502H1260L1260 505H1261L1261 514H1262L1262 518H1263L1263 508H1264L1264 505H1266L1266 520H1267L1267 503H1269L1269 510H1271L1271 500H1272L1272 505H1273L1273 510H1275L1275 511H1277L1277 527H1279L1279 504H1281L1281 521H1283L1283 508H1286L1286 506H1289L1289 516H1290L1290 508H1291L1291 507H1293L1293 514H1295L1295 507H1298L1298 507H1300L1300 508H1301L1301 506H1302L1302 514H1303L1303 505H1305L1305 506H1307L1307 501H1308L1308 505H1310L1310 517H1311L1311 508H1312L1312 507H1314L1314 520H1315L1315 514H1316L1316 515H1317L1317 500H1318L1318 503H1319L1319 502H1320L1320 503H1322L1322 505H1324L1324 514H1326L1326 532H1327L1327 556H1328L1328 567H1329L1329 574H1330L1330 581H1331L1331 586H1332L1332 591H1333L1333 594H1334L1334 598H1335L1335 600H1336L1336 603H1337L1337 604H1338L1338 605H1339L1339 606H1340L1340 606H1341L1341 606H1342L1342 606H1343L1343 606H1344L1344 606H1345L1345 606H1346L1346 606H1347L1347 606H1348L1348 606H1349L1349 606H1350L1350 606H1351L1351 606H1352L1352 606H1353L1353 606H1354L1354 606H1355L1355 606H1356L1356 606H1357L1357 606H1358L1358 606H1359L1359 606H1360L1360 606H1361L1361 606H1362L1362 606H1363L1363 606H1364L1364 606H1365L1365 606H1366L1366 606H1367L1367 606H1368L1368 606H1369L1369 606H1370L1370 606H1371L1371 606H1372L1372 609H1371L1371 609H1370L1370 609H1369L1369 609H1368L1368 609H1367L1367 609H1366L1366 609H1365L1365 609H1364L1364 609H1363L1363 609H1362L1362 609H1361L1361 609H1360L1360 609H1359L1359 609H1358L1358 609H1357L1357 609H1356L1356 609H1355L1355 609H1354L1354 609H1353L1353 609H1352L1352 609H1351L1351 609H1350L1350 609H1349L1349 609H1348L1348 609H1347L1347 609H1346L1346 609H1345L1345 609H1344L1344 609H1343L1343 609H1342L1342 609H1341L1341 609H1340L1340 609H1339L1339 610H1338L1338 611H1337L1337 612H1336L1336 615H1335L1335 617H1334L1334 621H1333L1333 624H1332L1332 629H1331L1331 635H1330L1330 641H1329L1329 648H1328L1328 659H1327L1327 683H1326L1326 706H1324L1324 710H1323L1323 700H1321L1321 704H1318L1318 708H1315L1315 702H1313L1313 710H1311L1311 710H1310L1310 708H1308L1308 704H1307L1307 703H1305L1305 702H1304L1304 707H1303L1303 692H1301L1301 702H1300L1300 696H1298L1298 709H1297L1297 711H1296L1296 693H1293L1293 704H1291L1291 708H1290L1290 704H1288L1288 701H1286L1286 704H1285L1285 694H1284L1284 703H1282L1282 708H1281L1281 707H1280L1280 689H1278L1278 695H1276L1276 704H1275L1275 705H1272L1272 695H1270L1270 703H1268L1268 704H1267L1267 682H1266L1266 705H1263L1263 711H1261L1261 706H1259L1259 692H1257L1257 690H1256L1256 698H1253L1253 697H1251L1251 708H1250L1250 703H1248L1248 697H1246L1246 700H1244L1244 700H1242L1242 711H1241L1241 700H1240L1240 705H1238L1238 705H1236L1236 706H1234L1234 682H1232L1232 697H1230L1230 706H1228L1228 699H1226L1226 686H1225L1225 704H1223L1223 684H1222L1222 709H1221L1221 705H1218L1218 699H1215L1215 706H1213L1213 705H1211L1211 702H1209L1209 702H1207L1207 700H1205L1205 707H1203L1203 705H1200L1200 709H1199L1199 705H1197L1197 707H1195L1195 699H1194L1194 697H1192L1192 691H1189L1189 692H1188L1188 699H1186L1186 698H1183L1183 707H1182L1182 708H1181L1181 702H1180L1180 708H1178L1178 688H1177L1177 700H1174L1174 699H1171L1171 696H1169L1169 709H1168L1168 703H1165L1165 707H1164L1164 702H1162L1162 701H1159L1159 705H1156L1156 702H1154L1154 709H1153L1153 697H1152L1152 708H1150L1150 704H1148L1148 703H1146L1146 694H1145L1145 701H1144L1144 714H1143L1143 712H1142L1142 707H1140L1140 709H1137L1137 702H1136L1136 703H1134L1134 703H1132L1132 706H1129L1129 711H1128L1128 713H1127L1127 705H1125L1125 703H1122L1122 705H1120L1120 702H1117L1117 700H1114L1114 703H1112L1112 696H1110L1110 695H1108L1108 699H1107L1107 684H1106L1106 700H1104L1104 706H1102L1102 702H1099L1099 709H1097L1097 709H1096L1096 706H1095L1095 708H1094L1094 694H1092L1092 705H1090L1090 685H1089L1089 707H1087L1087 705H1086L1086 691H1085L1085 712H1084L1084 703H1082L1082 707H1080L1080 707H1078L1078 680H1077L1077 701H1074L1074 703H1073L1073 700H1070L1070 707H1068L1068 705H1066L1066 707H1064L1064 710H1061L1061 703H1059L1059 701H1057L1057 705H1056L1056 704H1053L1053 705H1051L1051 706H1050L1050 709H1048L1048 697H1046L1046 698H1044L1044 705H1042L1042 703H1040L1040 704H1038L1038 702H1035L1035 698H1034L1034 697H1032L1032 681H1031L1031 687H1029L1029 708H1027L1027 710H1024L1024 708H1021L1021 703H1018L1018 706H1016L1016 704H1014L1014 705H1012L1012 707H1010L1010 691H1009L1009 709H1008L1008 709H1006L1006 690H1005L1005 699H1002L1002 708H1001L1001 689H1000L1000 706H997L997 693H996L996 705H994L994 702H993L993 686H992L992 702H990L990 697H988L988 707H987L987 695H986L986 681H985L985 701H982L982 702H979L979 705H977L977 704H975L975 704H974L974 705H972L972 708H971L971 707H968L968 703H966L966 701H964L964 694H962L962 704H961L961 703H960L960 697H959L959 689H958L958 700H955L955 692H954L954 706H952L952 702H951L951 702H948L948 706H946L946 706H944L944 686H942L942 707H941L941 702H939L939 701H937L937 703H936L936 701H933L933 704H931L931 703H928L928 696H927L927 708H924L924 703H923L923 708H921L921 704H919L919 706H918L918 707H917L917 698H915L915 708H912L912 709H909L909 699H907L907 709H906L906 711H904L904 705H902L902 710H901L901 700H899L899 703H898L898 706H897L897 711H895L895 704H893L893 701H891L891 701H889L889 695H887L887 696H886L886 704H884L884 705H881L881 704H880L880 703H879L879 704H876L876 706H874L874 703H871L871 702H870L870 702H868L868 705H865L865 696H863L863 708H862L862 693H861L861 694H859L859 704H857L857 710H856L856 710H855L855 705H853L853 699H850L850 703H849L849 702H848L848 702H846L846 685H844L844 700H842L842 705H841L841 706H838L838 707H836L836 709H835L835 694H832L832 701H829L829 712H828L828 706H827L827 689H826L826 709H824L824 693H823L823 708H821L821 703H819L819 698H817L817 707H816L816 702H814L814 707H813L813 705H812L812 706H810L810 707H808L808 695H806L806 694H805L805 707H802L802 692H800L800 698H799L799 703H797L797 705H796L796 704H794L794 701H791L791 708H790L790 696H789L789 707H788L788 694H787L787 693H786L786 705H784L784 703H782L782 693H781L781 705H778L778 706H775L775 685H773L773 706H771L771 695H769L769 686H768L768 705H767L767 704H764L764 694H762L762 701H761L761 702H760L760 698H758L758 709H757L757 709H754L754 711H753L753 709H751L751 707H750L750 708H747L747 690H746L746 708H745L745 706H744L744 705H743L743 691H741L741 701H739L739 710H738L738 701H735L735 679H733L733 678H732L732 706H730L730 707H728L728 706H726L726 696H723L723 683H721L721 701H719L719 697H717L717 692H715L715 683H713L713 695H711L711 706H709L709 702H708L708 699H705L705 706H703L703 696H701L701 706H700L700 702H699L699 682H698L698 686H697L697 704H695L695 706H692L692 706H691L691 709H690L690 694H689L689 705H687L687 707H684L684 698H682L682 708H680L680 711H679L679 710H677L677 696H674L674 699H673L673 705H671L671 697H670L670 700H667L667 695H665L665 696H664L664 705H662L662 696H661L661 703H658L658 705H657L657 705H655L655 707H654L654 696H652L652 710H650L650 700H649L649 707H646L646 709H645L645 687H644L644 711H642L642 700H640L640 706H637L637 702H636L636 707H635L635 705H633L633 709H631L631 709H630L630 708H628L628 706H627L627 707H626L626 703H624L624 691H622L622 697H620L620 698H619L619 694H618L618 709H616L616 699H615L615 706H612L612 706H610L610 707H609L609 704H607L607 708H605L605 696H603L603 698H602L602 706H600L600 706H599L599 703H597L597 701H595L595 702H594L594 694H591L591 695H588L588 705H586L586 705H584L584 696H581L581 708H580L580 678H579L579 704H577L577 707H576L576 684H575L575 704H573L573 704H572L572 700H570L570 696H567L567 705H565L565 692H563L563 710H562L562 707H560L560 707H558L558 705H556L556 707H553L553 701H550L550 705H547L547 698H545L545 698H543L543 702H542L542 709H541L541 706H540L540 695H539L539 705H538L538 707H537L537 691H535L535 702H533L533 702H532L532 706H530L530 699H527L527 700H525L525 708H522L522 705H520L520 701H518L518 709H516L516 706H513L513 702H512L512 701H510L510 700H509L509 704H508L508 710H507L507 699H504L504 697H502L502 701H501L501 700H498L498 704H496L496 705H495L495 702H493L493 700H491L491 706H489L489 693H488L488 707H485L485 687H484L484 706H481L481 704H478L478 711H477L477 710H475L475 706H473L473 706H471L471 702H469L469 690H468L468 698H467L467 696H466L466 704H465L465 696H464L464 689H463L463 702H461L461 702H458L458 703H457L457 690H456L456 707H454L454 703H453L453 692H450L450 702H448L448 691H447L447 701H445L445 693H444L444 694H443L443 710H440L440 707H437L437 705H435L435 700H432L432 710H431L431 705H429L429 701H427L427 681H425L425 699H424L424 687H423L423 704H420L420 710H417L417 694H416L416 704H415L415 709H413L413 702H410L410 711H408L408 699H406L406 673H404L404 671H401L401 672H399L399 673H396L396 671H394L394 673H393L393 672H391L391 670H390L390 674H389L389 672H388L388 659H386L386 669H385Z" fill="#51aee2" clip-path="url(#selclip)"/>
<rect x="385" y="739.5" width="987" height="17" fill="#4f5050"/>
<rect x="385" y="739.5" width="987" height="1.8" fill="#d6d6d6"/>
<rect x="385" y="754.8" width="987" height="2" fill="#e6e6e6"/>
<path d="M493 742V755H506Z" fill="#fff" shape-rendering="auto"/>
<path d="M1228 755L1242 742V755Z" fill="#fff" shape-rendering="auto"/>
<rect x="493" y="756.8" width="749" height="39" fill="#8ca5c2"/>
<rect x="385.7" y="757" width="1.8" height="12" fill="#dde4ee"/>
<rect x="429.3" y="757" width="1.6" height="5" fill="#dde4ee"/>
<rect x="472.9" y="757" width="1.8" height="12" fill="#dde4ee"/>
<rect x="516.5" y="757" width="1.6" height="5" fill="#dde4ee"/>
<rect x="560.1" y="757" width="1.8" height="12" fill="#dde4ee"/>
<rect x="603.7" y="757" width="1.6" height="5" fill="#dde4ee"/>
<rect x="647.3" y="757" width="1.8" height="12" fill="#dde4ee"/>
<rect x="690.9" y="757" width="1.6" height="5" fill="#dde4ee"/>
<rect x="734.5" y="757" width="1.8" height="12" fill="#dde4ee"/>
<rect x="778.1" y="757" width="1.6" height="5" fill="#dde4ee"/>
<rect x="821.8" y="757" width="1.8" height="12" fill="#dde4ee"/>
<rect x="865.4" y="757" width="1.6" height="5" fill="#dde4ee"/>
<rect x="909" y="757" width="1.8" height="12" fill="#dde4ee"/>
<rect x="952.6" y="757" width="1.6" height="5" fill="#dde4ee"/>
<rect x="996.2" y="757" width="1.8" height="12" fill="#dde4ee"/>
<rect x="1039.8" y="757" width="1.6" height="5" fill="#dde4ee"/>
<rect x="1083.4" y="757" width="1.8" height="12" fill="#dde4ee"/>
<rect x="1127" y="757" width="1.6" height="5" fill="#dde4ee"/>
<rect x="1170.6" y="757" width="1.8" height="12" fill="#dde4ee"/>
<rect x="1214.2" y="757" width="1.6" height="5" fill="#dde4ee"/>
<rect x="1257.8" y="757" width="1.8" height="12" fill="#dde4ee"/>
<rect x="1301.4" y="757" width="1.6" height="5" fill="#dde4ee"/>
<rect x="1345" y="757" width="1.8" height="12" fill="#dde4ee"/>
<g font-size="15.5" fill="#c3cede" text-anchor="middle" shape-rendering="auto" text-rendering="geometricPrecision">
<text x="474.9" y="791">0:20</text>
<text x="562.1" y="791">0:40</text>
<text x="649.3" y="791">1:00</text>
<text x="736.5" y="791">1:20</text>
<text x="823.8" y="791">1:40</text>
<text x="911" y="791">2:00</text>
<text x="998.2" y="791">2:20</text>
<text x="1085.4" y="791">2:40</text>
<text x="1172.6" y="791">3:00</text>
<text x="1259.8" y="791">3:20</text>
<text x="1347" y="791">3:40</text>
<text x="387" y="790" text-anchor="start" fill="#dbe2ec">hms</text>
</g>
<rect x="1372.3" y="170" width="2.2" height="587" fill="#c6d0e0"/>
<rect x="1374" y="211.2" width="12" height="1.4" fill="#d3dbe8"/>
<rect x="1374" y="456.4" width="12" height="1.4" fill="#d3dbe8"/>
<rect x="1374" y="224.5" width="7" height="1.4" fill="#d3dbe8"/>
<rect x="1374" y="443.1" width="7" height="1.4" fill="#d3dbe8"/>
<rect x="1374" y="236.4" width="7" height="1.4" fill="#d3dbe8"/>
<rect x="1374" y="431.2" width="7" height="1.4" fill="#d3dbe8"/>
<rect x="1374" y="247" width="7" height="1.4" fill="#d3dbe8"/>
<rect x="1374" y="420.6" width="7" height="1.4" fill="#d3dbe8"/>
<rect x="1374" y="256.4" width="12" height="1.4" fill="#d3dbe8"/>
<rect x="1374" y="411.2" width="12" height="1.4" fill="#d3dbe8"/>
<rect x="1374" y="264.9" width="7" height="1.4" fill="#d3dbe8"/>
<rect x="1374" y="402.7" width="7" height="1.4" fill="#d3dbe8"/>
<rect x="1374" y="272.4" width="7" height="1.4" fill="#d3dbe8"/>
<rect x="1374" y="395.2" width="7" height="1.4" fill="#d3dbe8"/>
<rect x="1374" y="279" width="7" height="1.4" fill="#d3dbe8"/>
<rect x="1374" y="388.6" width="7" height="1.4" fill="#d3dbe8"/>
<rect x="1374" y="285" width="7" height="1.4" fill="#d3dbe8"/>
<rect x="1374" y="382.6" width="7" height="1.4" fill="#d3dbe8"/>
<rect x="1374" y="290.3" width="7" height="1.4" fill="#d3dbe8"/>
<rect x="1374" y="377.3" width="7" height="1.4" fill="#d3dbe8"/>
<rect x="1374" y="295" width="12" height="1.4" fill="#d3dbe8"/>
<rect x="1374" y="372.6" width="12" height="1.4" fill="#d3dbe8"/>
<rect x="1374" y="333.8" width="12" height="1.4" fill="#d3dbe8"/>
<g font-size="15.5" fill="#c6cfde" shape-rendering="auto">
<text x="1393" y="219">0</text>
<text x="1393" y="464.2">0</text>
<text x="1393" y="264.2">-4</text>
<text x="1393" y="419">-4</text>
<text x="1393" y="302.8">-10</text>
<text x="1393" y="380.4">-10</text>
<text x="1393" y="340.6">-<tspan font-size="17" dx="-1">∞</tspan></text>
</g>
<rect x="1374" y="484.4" width="12" height="1.4" fill="#d3dbe8"/>
<rect x="1374" y="729.2" width="12" height="1.4" fill="#d3dbe8"/>
<rect x="1374" y="497.7" width="7" height="1.4" fill="#d3dbe8"/>
<rect x="1374" y="715.9" width="7" height="1.4" fill="#d3dbe8"/>
<rect x="1374" y="509.6" width="7" height="1.4" fill="#d3dbe8"/>
<rect x="1374" y="704" width="7" height="1.4" fill="#d3dbe8"/>
<rect x="1374" y="520.1" width="7" height="1.4" fill="#d3dbe8"/>
<rect x="1374" y="693.5" width="7" height="1.4" fill="#d3dbe8"/>
<rect x="1374" y="529.6" width="12" height="1.4" fill="#d3dbe8"/>
<rect x="1374" y="684" width="12" height="1.4" fill="#d3dbe8"/>
<rect x="1374" y="538" width="7" height="1.4" fill="#d3dbe8"/>
<rect x="1374" y="675.6" width="7" height="1.4" fill="#d3dbe8"/>
<rect x="1374" y="545.5" width="7" height="1.4" fill="#d3dbe8"/>
<rect x="1374" y="668.1" width="7" height="1.4" fill="#d3dbe8"/>
<rect x="1374" y="552.1" width="7" height="1.4" fill="#d3dbe8"/>
<rect x="1374" y="661.5" width="7" height="1.4" fill="#d3dbe8"/>
<rect x="1374" y="558.1" width="7" height="1.4" fill="#d3dbe8"/>
<rect x="1374" y="655.5" width="7" height="1.4" fill="#d3dbe8"/>
<rect x="1374" y="563.4" width="7" height="1.4" fill="#d3dbe8"/>
<rect x="1374" y="650.2" width="7" height="1.4" fill="#d3dbe8"/>
<rect x="1374" y="568.1" width="12" height="1.4" fill="#d3dbe8"/>
<rect x="1374" y="645.5" width="12" height="1.4" fill="#d3dbe8"/>
<rect x="1374" y="606.8" width="12" height="1.4" fill="#d3dbe8"/>
<g font-size="15.5" fill="#c6cfde" shape-rendering="auto">
<text x="1393" y="492.2">0</text>
<text x="1393" y="737">0</text>
<text x="1393" y="537.4">-4</text>
<text x="1393" y="691.8">-4</text>
<text x="1393" y="575.9">-10</text>
<text x="1393" y="653.3">-10</text>
<text x="1393" y="613.6">-<tspan font-size="17" dx="-1">∞</tspan></text>
</g>
<text x="1393" y="183" font-size="14.5" fill="#b4bfd2" shape-rendering="auto">dB</text>
<rect x="1443" y="200.5" width="20.2" height="559" fill="#eef1f6"/>
<rect x="1443" y="200.5" width="1.4" height="557" fill="#9aa5b8"/>
<rect x="1443" y="199.5" width="20.2" height="1.2" fill="#a9b4c8"/>
<rect x="1444.4" y="200.5" width="16.5" height="557" fill="#000"/>
<rect x="1477.5" y="200.5" width="20.2" height="559" fill="#eef1f6"/>
<rect x="1477.5" y="200.5" width="1.4" height="557" fill="#9aa5b8"/>
<rect x="1477.5" y="199.5" width="20.2" height="1.2" fill="#a9b4c8"/>
<rect x="1478.9" y="200.5" width="16.5" height="557" fill="#000"/>
</svg>
<div class="abs" style="left:213.5px;top:746.5px;width:31px;height:31px;border-radius:50%;background:#dceaf6;mix-blend-mode:multiply"></div>
<div class="abs" style="left:261px;top:735px;font-size:45px;line-height:52px;letter-spacing:-1.6px;color:rgba(255,255,255,.2);white-space:nowrap;transform:scaleX(.905);transform-origin:0 0">LO4D</div>
<div class="abs" style="left:369px;top:752px;font-size:28px;line-height:32px;letter-spacing:-.500px;color:rgba(255,255,255,.17);white-space:nowrap">.com</div>
<div class="abs" style="left:380px;top:800px;width:1120px;height:131px;background:#eceef6"></div>
<div class="abs" style="left:380px;top:800px;width:1120px;height:1px;background:#c3cadb"></div>
<div class="abs" style="left:380px;top:802px;width:3px;height:129px;background:#dfe3ee"></div>
<div class="abs" style="left:392px;top:823px;width:231.3px;height:91.2px;background:#b9c5d9"></div>
<div class="abs" style="left:392.9px;top:824.3px;width:44.3px;height:43.8px;background:#d7dfee"></div>
<svg class="abs" style="left:392.1px;top:823.2px" width="46" height="46" viewBox="0 0 46 46" fill="#4a5268"><path d="M14.5 13.5V32.5L34 23Z"/></svg>
<div class="abs" style="left:439px;top:824.3px;width:44.3px;height:43.8px;background:#d7dfee"></div>
<svg class="abs" style="left:438.2px;top:823.2px" width="46" height="46" viewBox="0 0 46 46" fill="#4a5268"><path d="M20 16.5H14.5a2.5 2.5 0 0 0 -2.5 2.5V27a2.5 2.5 0 0 0 2.5 2.5H31.5a2.5 2.5 0 0 0 2.5 -2.5V19a2.5 2.5 0 0 0 -2.5 -2.5H27" fill="none" stroke="#4a5268" stroke-width="3"/><path d="M20 11L27.5 16.5L20 22Z"/><rect x="17" y="14.8" width="4" height="3.4"/></svg>
<div class="abs" style="left:485.1px;top:824.3px;width:44.3px;height:43.8px;background:#d7dfee"></div>
<svg class="abs" style="left:484.3px;top:823.2px" width="46" height="46" viewBox="0 0 46 46" fill="#4a5268"><path d="M12 15V31L27 23Z"/><rect x="26" y="15" width="4.6" height="16"/></svg>
<div class="abs" style="left:531.2px;top:824.3px;width:44.3px;height:43.8px;background:#d7dfee"></div>
<svg class="abs" style="left:530.5px;top:823.2px" width="46" height="46" viewBox="0 0 46 46" fill="#4a5268"><path d="M22.5 15V31L13 23ZM31.5 15V31L22 23Z"/></svg>
<div class="abs" style="left:577.3px;top:824.3px;width:44.3px;height:43.8px;background:#d7dfee"></div>
<svg class="abs" style="left:576.5px;top:823.2px" width="46" height="46" viewBox="0 0 46 46" fill="#4a5268"><path d="M14.5 15V31L24 23ZM23.5 15V31L33 23Z"/></svg>
<div class="abs" style="left:392.9px;top:869.7px;width:44.3px;height:43.8px;background:#d7dfee"></div>
<svg class="abs" style="left:392.1px;top:868.6px" width="46" height="46" viewBox="0 0 46 46" fill="#4a5268"><rect x="15" y="14.5" width="15" height="15"/></svg>
<div class="abs" style="left:439px;top:869.7px;width:44.3px;height:43.8px;background:#d7dfee"></div>
<svg class="abs" style="left:438.2px;top:868.6px" width="46" height="46" viewBox="0 0 46 46" fill="#4a5268"><rect x="14" y="14.5" width="5" height="15"/><rect x="24" y="14.5" width="5" height="15"/></svg>
<div class="abs" style="left:485.1px;top:869.7px;width:44.3px;height:43.8px;background:#d7dfee"></div>
<svg class="abs" style="left:484.3px;top:868.6px" width="46" height="46" viewBox="0 0 46 46" fill="#4a5268"><circle cx="22.8" cy="22.3" r="7.7" fill="#f04a24"/></svg>
<div class="abs" style="left:531.2px;top:869.7px;width:44.3px;height:43.8px;background:#d7dfee"></div>
<svg class="abs" style="left:530.5px;top:868.6px" width="46" height="46" viewBox="0 0 46 46" fill="#4a5268"><path d="M13 13V32M10.5 13H15.5M10.5 32H15.5" stroke="#4a5268" stroke-width="2.4" fill="none"/><path d="M23.5 15.5V29.5L15 22.5ZM32 15.5V29.5L23.5 22.5Z"/></svg>
<div class="abs" style="left:577.3px;top:869.7px;width:44.3px;height:43.8px;background:#d7dfee"></div>
<svg class="abs" style="left:576.5px;top:868.6px" width="46" height="46" viewBox="0 0 46 46" fill="#4a5268"><path d="M33 13V32M30.5 13H35.5M30.5 32H35.5" stroke="#4a5268" stroke-width="2.4" fill="none"/><path d="M13.5 15.5V29.5L22 22.5ZM22 15.5V29.5L30.5 22.5Z"/></svg>
<div class="abs" style="left:634px;top:823px;width:185.2px;height:91.2px;background:#b9c5d9"></div>
<div class="abs" style="left:634.9px;top:824.3px;width:44.3px;height:43.8px;background:#d7dfee"></div>
<svg class="abs" style="left:634.1px;top:823.2px" width="46" height="46" viewBox="0 0 46 46" fill="#4a5268"><circle cx="21" cy="20" r="9.3" fill="none" stroke="#4a5268" stroke-width="3"/><path d="M27.5 27L33.5 33" stroke="#4a5268" stroke-width="4.2" stroke-linecap="round"/><path d="M16.5 20H25.5M21 15.5V24.5" stroke="#4a5268" stroke-width="1.8"/></svg>
<div class="abs" style="left:681px;top:824.3px;width:44.3px;height:43.8px;background:#d7dfee"></div>
<svg class="abs" style="left:680.2px;top:823.2px" width="46" height="46" viewBox="0 0 46 46" fill="#4a5268"><circle cx="20" cy="20" r="9.3" fill="none" stroke="#4a5268" stroke-width="3"/><path d="M26.5 27L32.5 33" stroke="#4a5268" stroke-width="4.2" stroke-linecap="round"/><path d="M15.5 20H24.5" stroke="#4a5268" stroke-width="1.8"/></svg>
<div class="abs" style="left:727.1px;top:824.3px;width:44.3px;height:43.8px;background:#d7dfee"></div>
<svg class="abs" style="left:726.4px;top:823.2px" width="46" height="46" viewBox="0 0 46 46" fill="#4a5268"><circle cx="20" cy="19" r="9.3" fill="none" stroke="#4a5268" stroke-width="3"/><path d="M26.5 26L32.5 32" stroke="#4a5268" stroke-width="4.2" stroke-linecap="round"/><path d="M13 34V39" stroke="#4a5268" stroke-width="1.6"/><rect x="16" y="34.5" width="4" height="4" fill="none" stroke="#4a5268" stroke-width="1.4"/><rect x="22.5" y="34.5" width="4" height="4" fill="none" stroke="#4a5268" stroke-width="1.4"/></svg>
<div class="abs" style="left:773.2px;top:824.3px;width:44.3px;height:43.8px;background:#d7dfee"></div>
<svg class="abs" style="left:772.5px;top:823.2px" width="46" height="46" viewBox="0 0 46 46" fill="#4a5268"><circle cx="27" cy="20" r="9.3" fill="none" stroke="#4a5268" stroke-width="3"/><path d="M33.5 27L39.5 33" stroke="#4a5268" stroke-width="4.2" stroke-linecap="round"/><path d="M7.5 11L3.5 16.5H6.2V20H8.8V16.5H11.5ZM7.5 31L3.5 25.5H6.2V22H8.8V25.5H11.5Z"/></svg>
<div class="abs" style="left:634.9px;top:869.7px;width:44.3px;height:43.8px;background:#d7dfee"></div>
<svg class="abs" style="left:634.1px;top:868.6px" width="46" height="46" viewBox="0 0 46 46" fill="#4a5268"><circle cx="22" cy="21" r="9.3" fill="none" stroke="#4a5268" stroke-width="3"/><path d="M28.5 28L34.5 34" stroke="#4a5268" stroke-width="4.2" stroke-linecap="round"/><path d="M10.5 10H7V34H10.5" stroke="#4a5268" stroke-width="2.4" fill="none"/></svg>
<div class="abs" style="left:681px;top:869.7px;width:44.3px;height:43.8px;background:#d7dfee"></div>
<svg class="abs" style="left:680.2px;top:868.6px" width="46" height="46" viewBox="0 0 46 46" fill="#4a5268"><circle cx="20" cy="21" r="9.3" fill="none" stroke="#4a5268" stroke-width="3"/><path d="M26.5 28L32.5 34" stroke="#4a5268" stroke-width="4.2" stroke-linecap="round"/><path d="M15.5 19V16.5H18M22 16.5H24.5V19M24.5 23V25.5H22M18 25.5H15.5V23" stroke="#4a5268" stroke-width="1.5" fill="none"/></svg>
<div class="abs" style="left:727.1px;top:869.7px;width:44.3px;height:43.8px;background:#d7dfee"></div>
<svg class="abs" style="left:726.4px;top:868.6px" width="46" height="46" viewBox="0 0 46 46" fill="#4a5268"><circle cx="17" cy="21" r="9.3" fill="none" stroke="#4a5268" stroke-width="3"/><path d="M23.5 28L29.5 34" stroke="#4a5268" stroke-width="4.2" stroke-linecap="round"/><path d="M34.5 10H38V34H34.5" stroke="#4a5268" stroke-width="2.4" fill="none"/></svg>
<div class="abs" style="left:773.2px;top:869.7px;width:44.3px;height:43.8px;background:#d7dfee"></div>
<svg class="abs" style="left:772.5px;top:868.6px" width="46" height="46" viewBox="0 0 46 46" fill="#4a5268"><circle cx="27" cy="21" r="9.3" fill="none" stroke="#4a5268" stroke-width="3"/><path d="M33.5 28L39.5 34" stroke="#4a5268" stroke-width="4.2" stroke-linecap="round"/><path d="M7.5 21L3.5 15.5H6.2V12H8.8V15.5H11.5ZM7.5 22.5L3.5 28H6.2V31.5H8.8V28H11.5Z"/></svg>
<div class="abs" style="left:829px;top:804px;width:2px;height:127px;background:#8c909c"></div>
<div class="abs" style="left:1027px;top:804px;width:2px;height:127px;background:#8c909c"></div>
<div class="abs" style="left:830px;top:851px;width:198px;text-align:center;font-size:27.6px;line-height:34px;color:#1a1a1a;letter-spacing:.1px">00:00:24.645</div>
<div class="flbl" style="left:1134px;top:816px">Start</div>
<div class="flbl" style="left:1254.5px;top:816px">End</div>
<div class="flbl" style="left:1380px;top:817px">Length</div>
<div class="flbl" style="left:1000px;top:844px;width:116px;text-align:right">Selection</div>
<div class="flbl" style="left:1000px;top:884px;width:116px;text-align:right">View</div>
<div class="fld" style="left:1134px;top:841.5px;width:118px">00:00:24.645</div>
<div class="fld" style="left:1256.5px;top:841.5px;width:118px">00:03:16.399</div>
<div class="fld" style="left:1379px;top:841.5px;width:118px">00:02:51.754</div>
<div class="fld" style="left:1134px;top:881.5px;width:118px">00:00:00.000</div>
<div class="fld" style="left:1256.5px;top:881.5px;width:118px">00:03:45.593</div>
<div class="fld" style="left:1379px;top:881.5px;width:118px">00:03:45.593</div>
<div id="menu">
  <div class="gutter"></div>
  <div class="chk"></div>
  <svg class="abs" style="left:12px;top:8px" width="24" height="24" viewBox="0 0 24 24"><path d="M2.200 14.300L6.500 20.200L15.400 1.700" fill="none" stroke="#333" stroke-width="2.100"/></svg>
  <div class="mi" style="top:1px">Decimal (mm:ss.ddd)</div>
  <div class="mi" style="top:39px">Samples</div>
  <div class="mi" style="top:77px">Frames 60 fps</div>
  <div class="mi" style="top:115px">Frames 59.94 fps</div>
  <div class="mi" style="top:153px">Frames 50 fps</div>
  <div class="mi" style="top:191px">Frames 30 fps</div>
  <div class="mi" style="top:229px">Frames 29.97 fps</div>
  <div class="mi" style="top:267px">Frames 25 fps</div>
  <div class="mi" style="top:305px">Frames 24 fps</div>
</div>

</body>
</html>
